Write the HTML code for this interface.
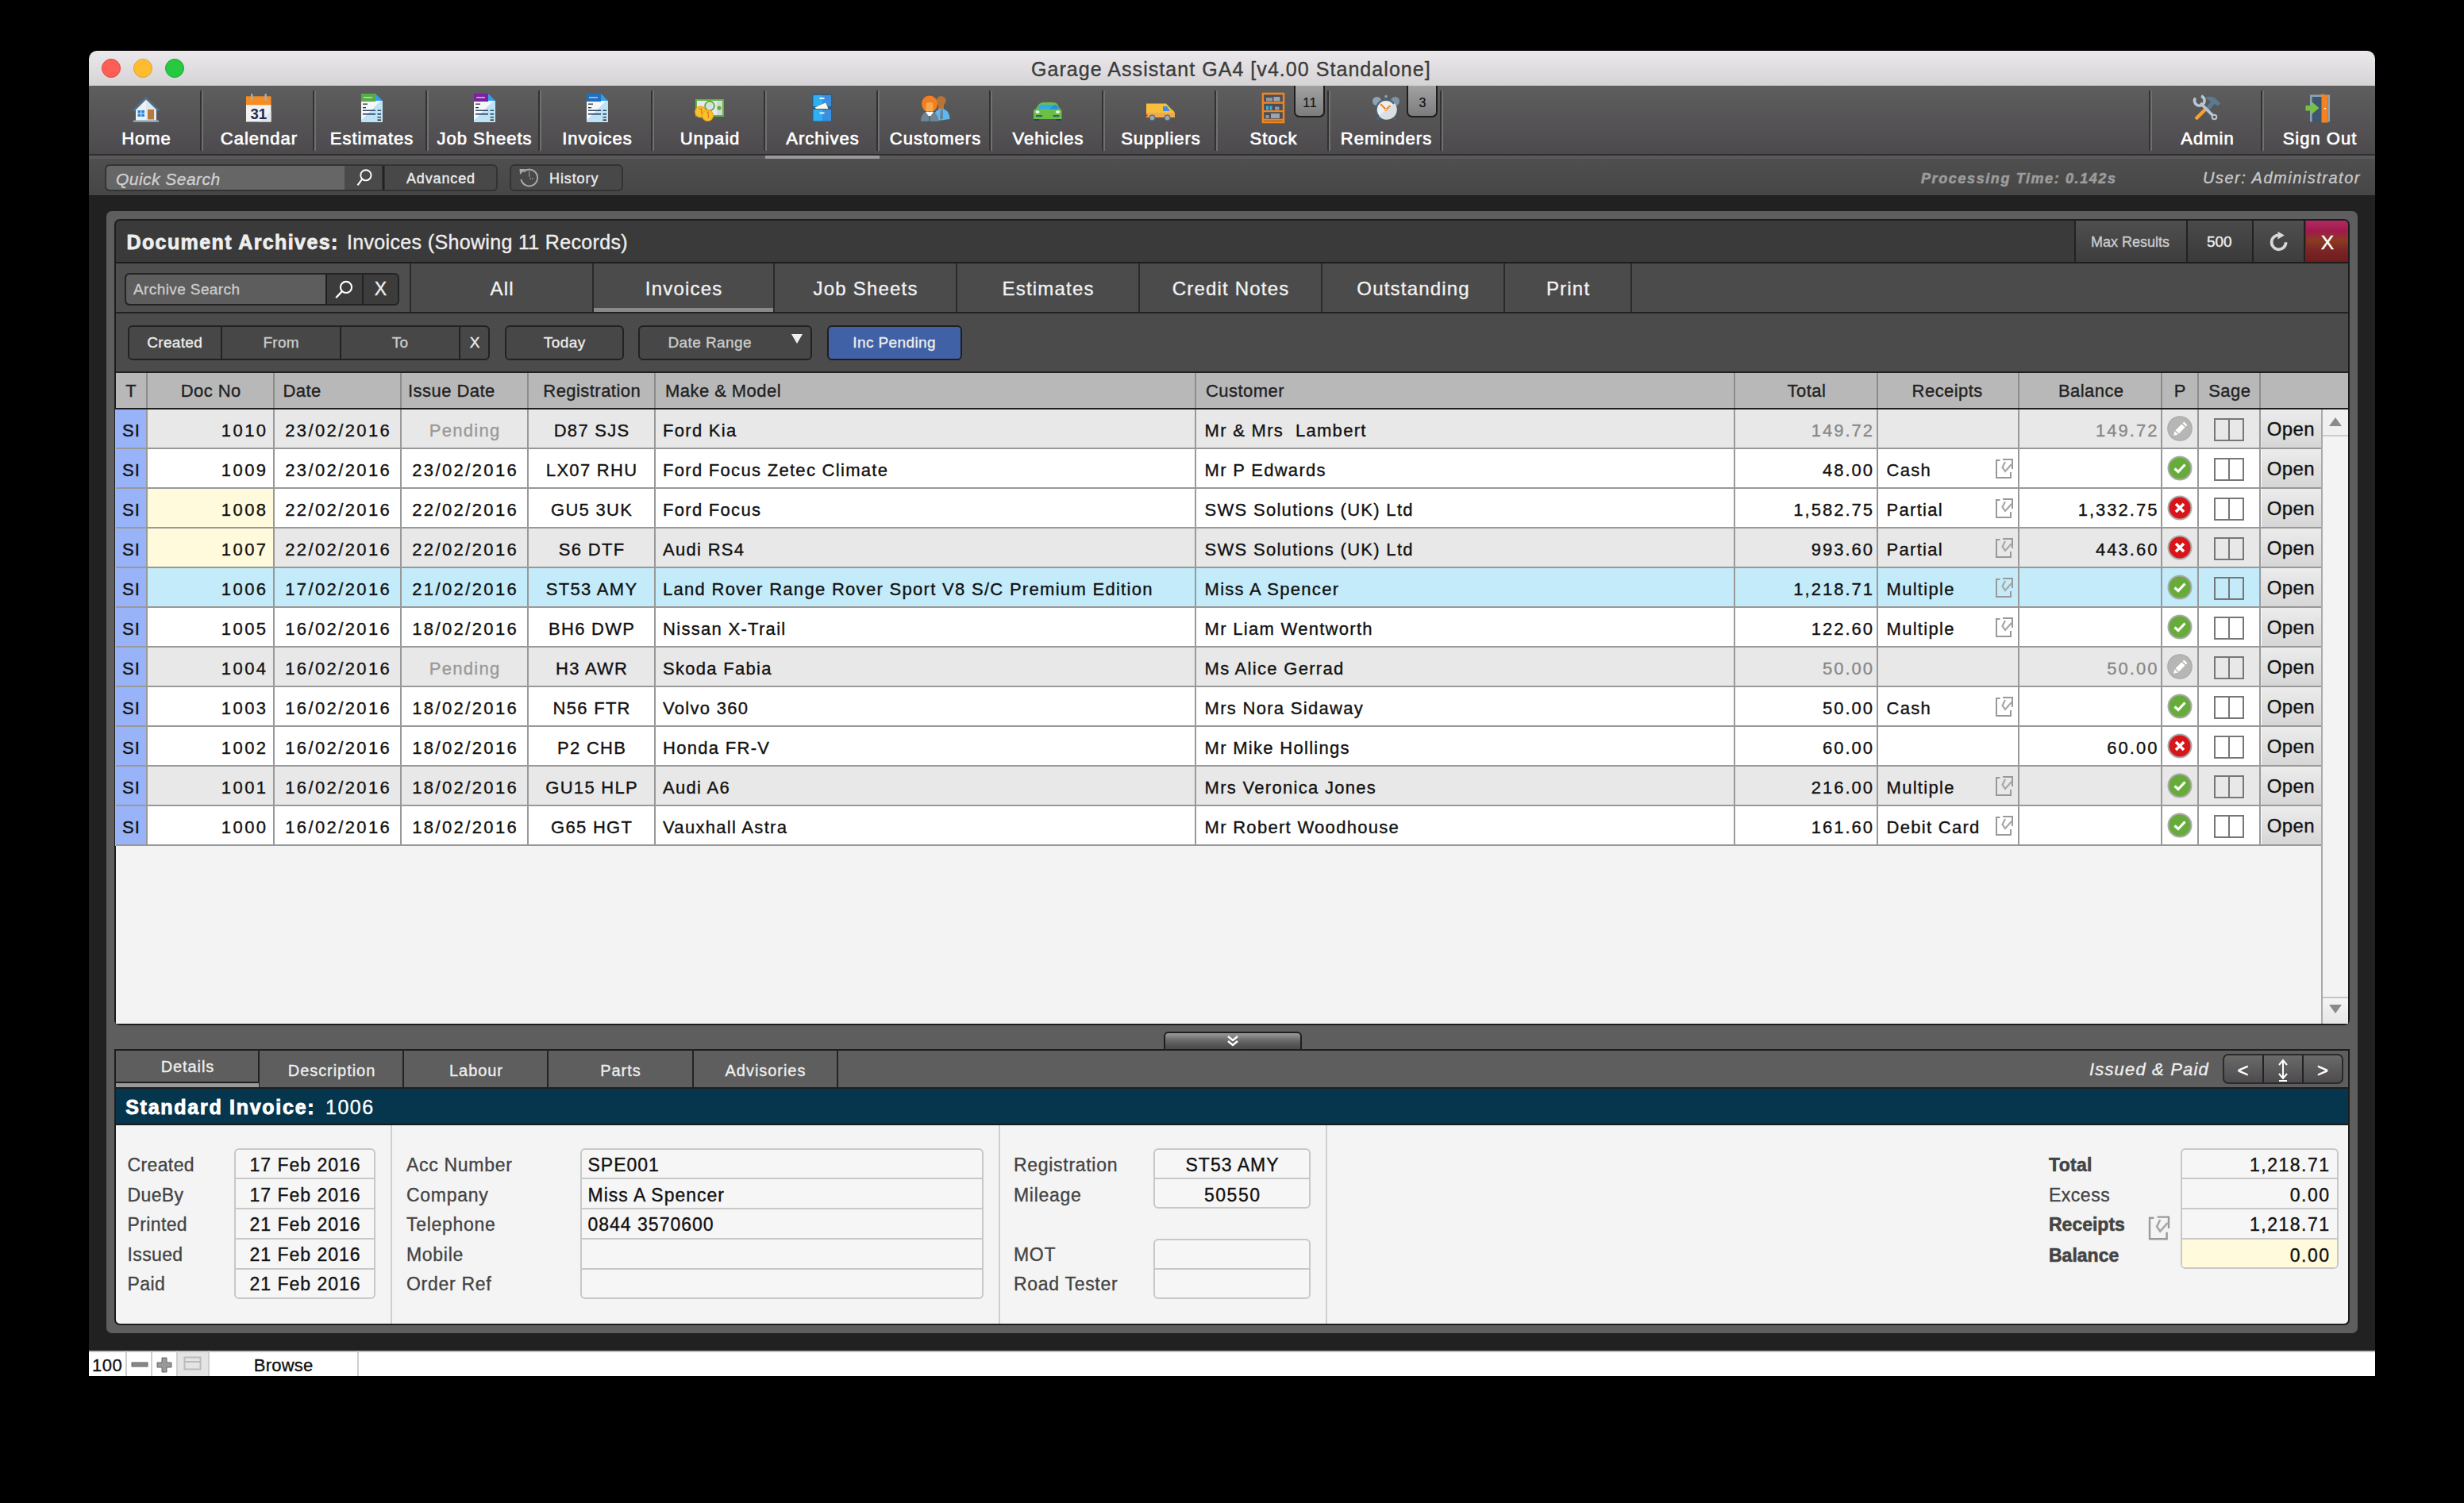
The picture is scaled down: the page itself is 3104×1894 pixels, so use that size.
<!DOCTYPE html><html><head><meta charset="utf-8"><style>
html,body{margin:0;padding:0;background:#000;width:3104px;height:1894px;overflow:hidden;font-family:"Liberation Sans", sans-serif;}
div{box-sizing:border-box;}
</style></head><body>
<div style="position:absolute;left:112px;top:64px;width:2880px;height:44px;background:linear-gradient(#ebe9eb,#d5d3d5);border-radius:10px 10px 0 0;"></div>
<div style="position:absolute;left:128px;top:74px;width:24px;height:24px;background:#fd5f57;border-radius:50%;border:1px solid #e0443e;"></div>
<div style="position:absolute;left:168px;top:74px;width:24px;height:24px;background:#febc2e;border-radius:50%;border:1px solid #dea236;"></div>
<div style="position:absolute;left:208px;top:74px;width:24px;height:24px;background:#28c840;border-radius:50%;border:1px solid #1aab29;"></div>
<div style="position:absolute;top:74.38px;height:27.93px;line-height:27.93px;font-size:25px;color:#3b3b3b;font-weight:normal;font-style:normal;letter-spacing:1.05px;white-space:pre;-webkit-text-stroke:0.35px #3b3b3b;left:1299.00px;">Garage Assistant GA4 [v4.00 Standalone]</div>
<div style="position:absolute;left:112px;top:108px;width:2880px;height:86px;background:linear-gradient(#5e5e5e,#4d4a4d);"></div>
<div style="position:absolute;left:112px;top:194px;width:2880px;height:2px;background:#2e2e2e;"></div>
<div style="position:absolute;left:112px;top:196px;width:2880px;height:4px;background:#595959;"></div>
<div style="position:absolute;left:252px;top:114px;width:4px;height:76px;background:linear-gradient(90deg,#323232 50%,#707070 50%);"></div>
<div style="position:absolute;left:394px;top:114px;width:4px;height:76px;background:linear-gradient(90deg,#323232 50%,#707070 50%);"></div>
<div style="position:absolute;left:536px;top:114px;width:4px;height:76px;background:linear-gradient(90deg,#323232 50%,#707070 50%);"></div>
<div style="position:absolute;left:678px;top:114px;width:4px;height:76px;background:linear-gradient(90deg,#323232 50%,#707070 50%);"></div>
<div style="position:absolute;left:820px;top:114px;width:4px;height:76px;background:linear-gradient(90deg,#323232 50%,#707070 50%);"></div>
<div style="position:absolute;left:962px;top:114px;width:4px;height:76px;background:linear-gradient(90deg,#323232 50%,#707070 50%);"></div>
<div style="position:absolute;left:1104px;top:114px;width:4px;height:76px;background:linear-gradient(90deg,#323232 50%,#707070 50%);"></div>
<div style="position:absolute;left:1246px;top:114px;width:4px;height:76px;background:linear-gradient(90deg,#323232 50%,#707070 50%);"></div>
<div style="position:absolute;left:1388px;top:114px;width:4px;height:76px;background:linear-gradient(90deg,#323232 50%,#707070 50%);"></div>
<div style="position:absolute;left:1530px;top:114px;width:4px;height:76px;background:linear-gradient(90deg,#323232 50%,#707070 50%);"></div>
<div style="position:absolute;left:1672px;top:114px;width:4px;height:76px;background:linear-gradient(90deg,#323232 50%,#707070 50%);"></div>
<div style="position:absolute;left:1814px;top:114px;width:4px;height:76px;background:linear-gradient(90deg,#323232 50%,#707070 50%);"></div>
<div style="position:absolute;left:2707px;top:114px;width:4px;height:76px;background:linear-gradient(90deg,#323232 50%,#707070 50%);"></div>
<div style="position:absolute;left:2848px;top:114px;width:4px;height:76px;background:linear-gradient(90deg,#323232 50%,#707070 50%);"></div>
<div style="position:absolute;top:163.09px;height:24.57px;line-height:24.57px;font-size:22px;color:#ffffff;font-weight:normal;font-style:normal;letter-spacing:1.0px;white-space:pre;-webkit-text-stroke:0.7px #ffffff;left:-415.50px;width:1200px;text-align:center;">Home</div>
<div style="position:absolute;top:163.09px;height:24.57px;line-height:24.57px;font-size:22px;color:#ffffff;font-weight:normal;font-style:normal;letter-spacing:1.0px;white-space:pre;-webkit-text-stroke:0.7px #ffffff;left:-273.50px;width:1200px;text-align:center;">Calendar</div>
<div style="position:absolute;top:163.09px;height:24.57px;line-height:24.57px;font-size:22px;color:#ffffff;font-weight:normal;font-style:normal;letter-spacing:1.0px;white-space:pre;-webkit-text-stroke:0.7px #ffffff;left:-131.50px;width:1200px;text-align:center;">Estimates</div>
<div style="position:absolute;top:163.09px;height:24.57px;line-height:24.57px;font-size:22px;color:#ffffff;font-weight:normal;font-style:normal;letter-spacing:1.0px;white-space:pre;-webkit-text-stroke:0.7px #ffffff;left:10.50px;width:1200px;text-align:center;">Job Sheets</div>
<div style="position:absolute;top:163.09px;height:24.57px;line-height:24.57px;font-size:22px;color:#ffffff;font-weight:normal;font-style:normal;letter-spacing:1.0px;white-space:pre;-webkit-text-stroke:0.7px #ffffff;left:152.50px;width:1200px;text-align:center;">Invoices</div>
<div style="position:absolute;top:163.09px;height:24.57px;line-height:24.57px;font-size:22px;color:#ffffff;font-weight:normal;font-style:normal;letter-spacing:1.0px;white-space:pre;-webkit-text-stroke:0.7px #ffffff;left:294.50px;width:1200px;text-align:center;">Unpaid</div>
<div style="position:absolute;top:163.09px;height:24.57px;line-height:24.57px;font-size:22px;color:#ffffff;font-weight:normal;font-style:normal;letter-spacing:1.0px;white-space:pre;-webkit-text-stroke:0.7px #ffffff;left:436.50px;width:1200px;text-align:center;">Archives</div>
<div style="position:absolute;top:163.09px;height:24.57px;line-height:24.57px;font-size:22px;color:#ffffff;font-weight:normal;font-style:normal;letter-spacing:1.0px;white-space:pre;-webkit-text-stroke:0.7px #ffffff;left:578.50px;width:1200px;text-align:center;">Customers</div>
<div style="position:absolute;top:163.09px;height:24.57px;line-height:24.57px;font-size:22px;color:#ffffff;font-weight:normal;font-style:normal;letter-spacing:1.0px;white-space:pre;-webkit-text-stroke:0.7px #ffffff;left:720.50px;width:1200px;text-align:center;">Vehicles</div>
<div style="position:absolute;top:163.09px;height:24.57px;line-height:24.57px;font-size:22px;color:#ffffff;font-weight:normal;font-style:normal;letter-spacing:1.0px;white-space:pre;-webkit-text-stroke:0.7px #ffffff;left:862.50px;width:1200px;text-align:center;">Suppliers</div>
<div style="position:absolute;top:163.09px;height:24.57px;line-height:24.57px;font-size:22px;color:#ffffff;font-weight:normal;font-style:normal;letter-spacing:1.0px;white-space:pre;-webkit-text-stroke:0.7px #ffffff;left:1004.50px;width:1200px;text-align:center;">Stock</div>
<div style="position:absolute;top:163.09px;height:24.57px;line-height:24.57px;font-size:22px;color:#ffffff;font-weight:normal;font-style:normal;letter-spacing:1.0px;white-space:pre;-webkit-text-stroke:0.7px #ffffff;left:1146.50px;width:1200px;text-align:center;">Reminders</div>
<div style="position:absolute;top:163.09px;height:24.57px;line-height:24.57px;font-size:22px;color:#ffffff;font-weight:normal;font-style:normal;letter-spacing:1.0px;white-space:pre;-webkit-text-stroke:0.7px #ffffff;left:2181.00px;width:1200px;text-align:center;">Admin</div>
<div style="position:absolute;top:163.09px;height:24.57px;line-height:24.57px;font-size:22px;color:#ffffff;font-weight:normal;font-style:normal;letter-spacing:1.0px;white-space:pre;-webkit-text-stroke:0.7px #ffffff;left:2322.50px;width:1200px;text-align:center;">Sign Out</div>
<div style="position:absolute;left:964px;top:196px;width:144px;height:4px;background:#9a9a9a;"></div>
<div style="position:absolute;left:1630px;top:108px;width:39px;height:39.5px;background:linear-gradient(#a2a2a2,#7c7c7c);border:2.5px solid #1e1e1e;border-top:none;border-radius:0 0 7px 7px;"></div>
<div style="position:absolute;top:120.52px;height:17.87px;line-height:17.87px;font-size:16px;color:#111;font-weight:normal;font-style:normal;letter-spacing:0.8px;white-space:pre;-webkit-text-stroke:0.2px #111;left:1050.40px;width:1200px;text-align:center;">11</div>
<div style="position:absolute;left:1772px;top:108px;width:39px;height:39.5px;background:linear-gradient(#a2a2a2,#7c7c7c);border:2.5px solid #1e1e1e;border-top:none;border-radius:0 0 7px 7px;"></div>
<div style="position:absolute;top:120.52px;height:17.87px;line-height:17.87px;font-size:16px;color:#111;font-weight:normal;font-style:normal;letter-spacing:0.8px;white-space:pre;-webkit-text-stroke:0.2px #111;left:1192.40px;width:1200px;text-align:center;">3</div>
<svg style="position:absolute;left:164px;top:118px;overflow:visible" width="40" height="38" viewBox="164 118 40 38">
<polygon points="184,124 171,137 171,152 197,152 197,137" fill="#eef2f5"/>
<polygon points="184,124 197,137 197,152 184,152" fill="#dfe8ee"/>
<path d="M168 139.5 L184 123.5 L200.5 139.5" fill="none" stroke="#4f6e88" stroke-width="3"/>
<rect x="173.5" y="139" width="3.8" height="3.5" fill="#2a86d8"/><rect x="178.2" y="139" width="3.8" height="3.5" fill="#2a86d8"/>
<rect x="173.5" y="143.5" width="3.8" height="3.5" fill="#2a86d8"/><rect x="178.2" y="143.5" width="3.8" height="3.5" fill="#2a86d8"/>
<rect x="186" y="138" width="8" height="12.5" fill="#b77838"/>
<rect x="168" y="151.5" width="32" height="2.5" fill="#8aa2b4"/>
</svg>
<svg style="position:absolute;left:308px;top:116px;overflow:visible" width="36" height="40" viewBox="308 116 36 40">
<rect x="310" y="132" width="31.5" height="21.5" fill="#f2f2f2"/>
<polygon points="341.5,140 341.5,153.5 326,153.5" fill="#e4e4e4"/>
<rect x="310" y="121.3" width="31.5" height="11" fill="#f68c22"/>
<rect x="316" y="118" width="2.4" height="9" rx="1.2" fill="#9db3c3"/>
<rect x="333.5" y="118" width="2.4" height="9" rx="1.2" fill="#9db3c3"/>
<text x="325.8" y="150.3" font-family="Liberation Sans" font-weight="bold" font-size="18.5" fill="#1b2a55" text-anchor="middle">31</text>
</svg>
<svg style="position:absolute;left:454.5px;top:116px;overflow:visible" width="29.0" height="40" viewBox="454.5 116 29.0 40">
<defs><linearGradient id="dg454.5" x1="0" y1="0" x2="1" y2="1"><stop offset="0.45" stop-color="#f4f8fb"/><stop offset="0.46" stop-color="#bfe3f6"/></linearGradient></defs>
<rect x="454.5" y="127" width="27" height="27" fill="url(#dg454.5)"/>
<rect x="454.5" y="118" width="18" height="10" fill="#58ab47"/>
<polygon points="472.5,118 481.5,127 472.5,127" fill="#2fa0ea"/>
<rect x="457.5" y="122" width="11" height="1.5" fill="#e8e8c0" opacity="0.8"/>
<rect x="456.5" y="130.5" width="6" height="1.3" fill="#333"/>
<rect x="456.5" y="135" width="4" height="1.3" fill="#333"/>
<rect x="456.5" y="138.5" width="16" height="1.5" fill="#34495e"/>
<rect x="475.0" y="138.5" width="4.5" height="1.5" fill="#34495e"/>
<rect x="456.5" y="143" width="16" height="1.5" fill="#1a2a5a"/>
<rect x="475.0" y="143" width="4.5" height="1.5" fill="#1a2a5a"/>
<rect x="475.0" y="147" width="4.5" height="1.5" fill="#444"/>
<rect x="475.0" y="150.5" width="4.5" height="1.5" fill="#222"/>
</svg>
<svg style="position:absolute;left:596.7px;top:116px;overflow:visible" width="29.0" height="40" viewBox="596.7 116 29.0 40">
<defs><linearGradient id="dg596.7" x1="0" y1="0" x2="1" y2="1"><stop offset="0.45" stop-color="#f4f8fb"/><stop offset="0.46" stop-color="#bfe3f6"/></linearGradient></defs>
<rect x="596.7" y="127" width="27" height="27" fill="url(#dg596.7)"/>
<rect x="596.7" y="118" width="18" height="10" fill="#7b22a0"/>
<polygon points="614.7,118 623.7,127 614.7,127" fill="#2fa0ea"/>
<rect x="599.7" y="122" width="11" height="1.5" fill="#e8e8c0" opacity="0.8"/>
<rect x="598.7" y="130.5" width="6" height="1.3" fill="#333"/>
<rect x="598.7" y="135" width="4" height="1.3" fill="#333"/>
<rect x="598.7" y="138.5" width="16" height="1.5" fill="#34495e"/>
<rect x="617.2" y="138.5" width="4.5" height="1.5" fill="#34495e"/>
<rect x="598.7" y="143" width="16" height="1.5" fill="#1a2a5a"/>
<rect x="617.2" y="143" width="4.5" height="1.5" fill="#1a2a5a"/>
<rect x="617.2" y="147" width="4.5" height="1.5" fill="#444"/>
<rect x="617.2" y="150.5" width="4.5" height="1.5" fill="#222"/>
</svg>
<svg style="position:absolute;left:738.7px;top:116px;overflow:visible" width="29.0" height="40" viewBox="738.7 116 29.0 40">
<defs><linearGradient id="dg738.7" x1="0" y1="0" x2="1" y2="1"><stop offset="0.45" stop-color="#f4f8fb"/><stop offset="0.46" stop-color="#bfe3f6"/></linearGradient></defs>
<rect x="738.7" y="127" width="27" height="27" fill="url(#dg738.7)"/>
<rect x="738.7" y="118" width="18" height="10" fill="#1f6fc2"/>
<polygon points="756.7,118 765.7,127 756.7,127" fill="#2fa0ea"/>
<rect x="741.7" y="122" width="11" height="1.5" fill="#e8e8c0" opacity="0.8"/>
<rect x="740.7" y="130.5" width="6" height="1.3" fill="#333"/>
<rect x="740.7" y="135" width="4" height="1.3" fill="#333"/>
<rect x="740.7" y="138.5" width="16" height="1.5" fill="#34495e"/>
<rect x="759.2" y="138.5" width="4.5" height="1.5" fill="#34495e"/>
<rect x="740.7" y="143" width="16" height="1.5" fill="#1a2a5a"/>
<rect x="759.2" y="143" width="4.5" height="1.5" fill="#1a2a5a"/>
<rect x="759.2" y="147" width="4.5" height="1.5" fill="#444"/>
<rect x="759.2" y="150.5" width="4.5" height="1.5" fill="#222"/>
</svg>
<svg style="position:absolute;left:872px;top:122px;overflow:visible" width="44" height="36" viewBox="872 122 44 36">
<rect x="876" y="125" width="36" height="22" fill="#63b43f"/>
<rect x="878" y="127" width="32" height="18" fill="#e6e9ec"/>
<rect x="903" y="127" width="7" height="18" fill="#d2d8dd"/>
<circle cx="894" cy="133.5" r="5.8" fill="none" stroke="#5fae3c" stroke-width="2"/>
<circle cx="894" cy="133" r="3.5" fill="#d8dde2"/>
<circle cx="906" cy="136" r="2.6" fill="#5fae3c"/>
<circle cx="882.5" cy="141" r="6.8" fill="#f8c22a" stroke="#f0a020" stroke-width="1.2"/>
<circle cx="891.5" cy="145.5" r="7" fill="#f8c22a" stroke="#f0a020" stroke-width="1.2"/>
<path d="M890.5 141.5 L892 141 L892.5 149" fill="none" stroke="#e07a1a" stroke-width="1.3"/>
<path d="M881 137.5 L883.5 137 L884 144" fill="none" stroke="#e07a1a" stroke-width="1.3"/>
</svg>
<svg style="position:absolute;left:1020px;top:116px;overflow:visible" width="32" height="40" viewBox="1020 116 32 40">
<rect x="1023" y="118" width="25.5" height="36" fill="#3b5a78"/>
<rect x="1024.5" y="120" width="11.5" height="14" fill="#2eb0f4"/><rect x="1036" y="120" width="11" height="14" fill="#3a8fe0"/>
<rect x="1024.5" y="138" width="11.5" height="14.5" fill="#2eb0f4"/><rect x="1036" y="138" width="11" height="14.5" fill="#3a8fe0"/>
<rect x="1032.5" y="123" width="6" height="1.8" fill="#fff"/><rect x="1032.5" y="141.5" width="6" height="1.8" fill="#fff"/>
<polygon points="1026.5,135.5 1040,129.5 1043.5,137 1028,137" fill="#fffbe3"/>
</svg>
<svg style="position:absolute;left:1156px;top:116px;overflow:visible" width="44" height="40" viewBox="1156 116 44 40">
<circle cx="1185.5" cy="127" r="6" fill="#b87436"/>
<rect x="1182" y="130" width="7" height="8" fill="#b87436"/>
<path d="M1176 152 Q1176 138 1186 137 Q1196 138 1196.5 150 Q1186 152 1176 152 Z" fill="#5bb8f2"/>
<polygon points="1185,138 1187.5,138 1188,149 1185.5,151 1184,149" fill="#6a8090"/>
<ellipse cx="1171" cy="131" rx="10" ry="10.5" fill="#f17f22"/>
<rect x="1166.5" y="129" width="9" height="12" rx="3" fill="#f6a84c"/>
<path d="M1160 153 Q1160 141 1171 140 Q1182 141 1182.5 153 Z" fill="#6e8393"/>
<polygon points="1166,141 1171,148 1176,141" fill="#fafafa"/>
<polygon points="1170,146 1172,146 1172,153 1170,153" fill="#55697a"/>
</svg>
<svg style="position:absolute;left:1298px;top:126px;overflow:visible" width="44" height="30" viewBox="1298 126 44 30">
<path d="M1309 131 Q1311 129 1315 129 L1326 129 Q1330 129 1332 131 L1335 137 L1337.5 139 L1337.5 150 L1302 150 L1302 139 L1305 137 Z" fill="#6cbf45"/>
<polygon points="1310,132 1331,132 1334,137.5 1307,137.5" fill="#2eaaf0"/>
<polygon points="1322,137.5 1328,132 1331,132 1334,137.5" fill="#2590e0"/>
<ellipse cx="1307" cy="141" rx="2.6" ry="1.8" fill="#fff"/><ellipse cx="1332.5" cy="141" rx="2.6" ry="1.8" fill="#fff"/>
<rect x="1305" y="145" width="8" height="2.2" fill="#3c5a78"/><rect x="1326.5" y="145" width="8" height="2.2" fill="#3c5a78"/>
<rect x="1303" y="150" width="6" height="2" fill="#24406a"/><rect x="1330.5" y="150" width="6" height="2" fill="#24406a"/>
</svg>
<svg style="position:absolute;left:1440px;top:126px;overflow:visible" width="44" height="30" viewBox="1440 126 44 30">
<path d="M1444 130.5 L1469 130.5 L1476 138 Q1480 140 1480 144 L1480 148 L1444 148 Z" fill="#f8bf3e"/>
<rect x="1444" y="142" width="36" height="6" fill="#f0a848"/>
<polygon points="1465,134 1470,134 1474,140 1465,140" fill="#3c8ee8"/>
<circle cx="1451.5" cy="148.5" r="3.3" fill="#9aa8b2" stroke="#5a6a78" stroke-width="1.2"/>
<circle cx="1470.5" cy="148.5" r="3.3" fill="#9aa8b2" stroke="#5a6a78" stroke-width="1.2"/>
<rect x="1444" y="144.5" width="1.5" height="2" fill="#e02020"/>
</svg>
<svg style="position:absolute;left:1588px;top:116px;overflow:visible" width="32" height="40" viewBox="1588 116 32 40">
<rect x="1591" y="118" width="26" height="36" fill="none" stroke="#f2841e" stroke-width="2.6"/>
<rect x="1592" y="128.3" width="24" height="2.4" fill="#f2841e"/>
<rect x="1592" y="139" width="24" height="2.4" fill="#f2841e"/>
<rect x="1592" y="149.5" width="24" height="2.4" fill="#f2841e"/>
<rect x="1592.5" y="120" width="23" height="8" fill="#4c4c54"/>
<rect x="1595" y="123" width="8" height="4.5" fill="#8c9aa6"/><rect x="1604.5" y="122" width="8" height="5.5" fill="#98a6b2"/>
<rect x="1592.5" y="131" width="23" height="8" fill="#4c4c54"/>
<rect x="1595" y="133.5" width="3" height="5" fill="#2eb0f4"/><rect x="1599.5" y="133.5" width="3" height="5" fill="#2eb0f4"/><rect x="1606" y="134.5" width="5.5" height="4" fill="#8c9aa6"/>
<rect x="1592.5" y="141.5" width="23" height="8" fill="#4c4c54"/>
<rect x="1594.5" y="145" width="4" height="4" fill="#8c9aa6"/><rect x="1601" y="143" width="11" height="6" fill="#98a6b2"/>
</svg>
<svg style="position:absolute;left:1726px;top:116px;overflow:visible" width="40" height="40" viewBox="1726 116 40 40">
<circle cx="1734.5" cy="127.5" r="5.5" fill="#8ea4b4"/>
<circle cx="1757.5" cy="127.5" r="5.5" fill="#7d94a6"/>
<circle cx="1746" cy="121.5" r="1.8" fill="#8ea4b4"/>
<rect x="1733" y="148" width="4" height="3.5" fill="#4a6278"/><rect x="1755" y="148" width="4" height="3.5" fill="#4a6278"/>
<circle cx="1746" cy="137.8" r="13.2" fill="#4a6278"/>
<circle cx="1746" cy="138.2" r="11.2" fill="#eeeeee"/>
<path d="M1746 138.2 L1757 130 A11.2 11.2 0 0 1 1737 146 Z" fill="#d8e0e6"/>
<path d="M1739 131 L1746 138 L1751.5 133" fill="none" stroke="#f08a1a" stroke-width="2"/>
<circle cx="1746" cy="138" r="1.5" fill="#fff" stroke="#f08a1a" stroke-width="1"/>
</svg>
<svg style="position:absolute;left:2760px;top:116px;overflow:visible" width="40" height="40" viewBox="2760 116 40 40">
<path d="M2766 150 L2780 136" stroke="#f7a030" stroke-width="4.5"/>
<path d="M2777 124 Q2784 119 2791 124 L2797 130 L2794.5 133.5 L2789.5 131 L2781 141 L2777.5 137.5 L2785 128 Q2782 125 2777 124 Z" fill="#5a7a92"/>
<path d="M2772 130 L2790 148" stroke="#b8c6d0" stroke-width="3.8"/>
<path d="M2765.5 123.5 A6.3 6.3 0 1 0 2773 121" fill="none" stroke="#b8c6d0" stroke-width="3.6"/>
<circle cx="2789.5" cy="147.5" r="3.8" fill="#b8c6d0"/><circle cx="2789.5" cy="147.5" r="1.8" fill="#555"/>
</svg>
<svg style="position:absolute;left:2900px;top:116px;overflow:visible" width="40" height="40" viewBox="2900 116 40 40">
<rect x="2910" y="119.5" width="25" height="34" fill="#8ea4b4"/>
<rect x="2912.5" y="122" width="20" height="32" fill="#3e5670"/>
<polygon points="2924.5,118 2932.5,120.5 2932.5,154.5 2924.5,154.5" fill="#f58220"/>
<rect x="2928" y="136" width="2" height="1.5" fill="#fff"/>
<polygon points="2904.5,133 2912,133 2912,128 2921.5,136 2912,144 2912,139.5 2904.5,139.5" fill="#78bf48"/>
</svg>
<div style="position:absolute;left:112px;top:200px;width:2880px;height:46px;background:linear-gradient(#4f4f4f,#464646);"></div>
<div style="position:absolute;left:132px;top:207px;width:351px;height:34px;background:#4a4a4a;border:2px solid #333;border-radius:6px 0 0 6px;"></div>
<div style="position:absolute;left:134px;top:209px;width:300px;height:30px;background:#666;border-radius:5px 0 0 5px;"></div>
<div style="position:absolute;top:213.59px;height:23.46px;line-height:23.46px;font-size:21px;color:#cfcfcf;font-weight:normal;font-style:italic;letter-spacing:0.47px;white-space:pre;-webkit-text-stroke:0.35px #cfcfcf;left:146.00px;">Quick Search</div>
<div style="position:absolute;left:483px;top:207px;width:144px;height:34px;background:#484848;border:2px solid #333;border-radius:0 6px 6px 0;"></div>
<svg style="position:absolute;left:444px;top:210px;overflow:visible" width="30" height="28" viewBox="444 210 30 28"><circle cx="460.9" cy="220.8" r="6.6" fill="none" stroke="#fff" stroke-width="1.9"/><path d="M456.3 225.6 L450.5 233.4" stroke="#fff" stroke-width="2"/></svg>
<div style="position:absolute;left:482px;top:209px;width:2px;height:30px;background:#222;"></div>
<div style="position:absolute;top:214.71px;height:20.11px;line-height:20.11px;font-size:18px;color:#eeeeee;font-weight:normal;font-style:normal;letter-spacing:0.87px;white-space:pre;-webkit-text-stroke:0.35px #eeeeee;left:-44.56px;width:1200px;text-align:center;">Advanced</div>
<div style="position:absolute;left:642px;top:207px;width:143px;height:34px;background:#484848;border:2px solid #333;border-radius:6px;"></div>
<svg style="position:absolute;left:652px;top:210px;overflow:visible" width="30" height="28" viewBox="652 210 30 28"><path d="M659.5 216.5 A10.4 10.4 0 1 1 656.5 226" fill="none" stroke="#a8a8a8" stroke-width="2"/><polygon points="654.5,213 662,213 655,220" fill="#a8a8a8"/><path d="M666.7 216 V223.5 M667.5 225 H672" stroke="#ccc" stroke-width="1.2" stroke-dasharray="1.5 1"/></svg>
<div style="position:absolute;top:214.71px;height:20.11px;line-height:20.11px;font-size:18px;color:#eeeeee;font-weight:normal;font-style:normal;letter-spacing:0.9px;white-space:pre;-webkit-text-stroke:0.35px #eeeeee;left:692.00px;">History</div>
<div style="position:absolute;top:214.71px;height:20.11px;line-height:20.11px;font-size:18px;color:#9b9b9b;font-weight:bold;font-style:italic;letter-spacing:1.6px;white-space:pre;-webkit-text-stroke:0.6px #9b9b9b;left:2420.00px;">Processing Time: 0.142s</div>
<div style="position:absolute;top:212.90px;height:22.34px;line-height:22.34px;font-size:20px;color:#c8c8c8;font-weight:normal;font-style:italic;letter-spacing:1.5px;white-space:pre;-webkit-text-stroke:0.35px #c8c8c8;left:2775.00px;">User: Administrator</div>
<div style="position:absolute;left:112px;top:246px;width:2880px;height:1457px;background:#212121;"></div>
<div style="position:absolute;left:134px;top:266px;width:2836px;height:1414px;background:#5e5e5e;border-radius:7px;"></div>
<div style="position:absolute;left:144px;top:276px;width:2816px;height:1016px;background:#3a3a3a;border:2px solid #1d1d1d;border-radius:7px 7px 7px 7px;overflow:hidden;"></div>
<div style="position:absolute;top:292.38px;height:27.93px;line-height:27.93px;font-size:25px;color:#eeeeee;font-weight:normal;font-style:normal;letter-spacing:1.39px;white-space:pre;-webkit-text-stroke:0.8px #eeeeee;left:159.50px;"><b>Document Archives:</b></div>
<div style="position:absolute;top:292.38px;height:27.93px;line-height:27.93px;font-size:25px;color:#eeeeee;font-weight:normal;font-style:normal;letter-spacing:0.34px;white-space:pre;-webkit-text-stroke:0.35px #eeeeee;left:437.00px;">Invoices (Showing 11 Records)</div>
<div style="position:absolute;left:2613px;top:278px;width:141px;height:52px;background:linear-gradient(#4f4f4f,#3d3d3d);border-left:2px solid #222;"></div>
<div style="position:absolute;top:294.71px;height:20.11px;line-height:20.11px;font-size:18px;color:#cccccc;font-weight:normal;font-style:normal;letter-spacing:0.0px;white-space:pre;-webkit-text-stroke:0.35px #cccccc;left:2083.60px;width:1200px;text-align:center;">Max Results</div>
<div style="position:absolute;left:2754px;top:278px;width:83px;height:52px;background:linear-gradient(#4a4a4a,#3a3a3a);border-left:2px solid #222;"></div>
<div style="position:absolute;top:293.81px;height:21.22px;line-height:21.22px;font-size:19px;color:#eeeeee;font-weight:normal;font-style:normal;letter-spacing:0.0px;white-space:pre;-webkit-text-stroke:0.35px #eeeeee;left:2195.75px;width:1200px;text-align:center;">500</div>
<div style="position:absolute;left:2837px;top:278px;width:67px;height:52px;background:linear-gradient(#4f4f4f,#3d3d3d);border-left:2px solid #222;border-right:2px solid #222;"></div>
<div style="position:absolute;left:2905px;top:278px;width:53px;height:52px;background:linear-gradient(#b22a62,#a01a4c 25%,#8c3a22 48%,#7c2626 70%,#6e1c1c);border-radius:0 5px 0 0;"></div>
<div style="position:absolute;top:291.73px;height:27.37px;line-height:27.37px;font-size:24.5px;color:#ffffff;font-weight:normal;font-style:normal;letter-spacing:0.0px;white-space:pre;-webkit-text-stroke:0.35px #ffffff;left:2331.90px;width:1200px;text-align:center;">X</div>
<svg style="position:absolute;left:2855px;top:290px;overflow:visible" width="31" height="30" viewBox="2855 290 31 30"><path d="M2879.6 305.3 A9 9 0 1 1 2872 296.4" fill="none" stroke="#d8d8d8" stroke-width="3.7"/><polygon points="2869.5,291.8 2877.8,296.4 2869.5,301.5" fill="#d8d8d8"/></svg>
<div style="position:absolute;left:146px;top:330px;width:2812px;height:2px;background:#1d1d1d;"></div>
<div style="position:absolute;left:146px;top:332px;width:2812px;height:62px;background:#4b4b4b;"></div>
<div style="position:absolute;left:146px;top:332px;width:371px;height:62px;background:#4e4e4e;"></div>
<div style="position:absolute;left:516px;top:332px;width:2px;height:62px;background:#2a2a2a;"></div>
<div style="position:absolute;left:746px;top:332px;width:2px;height:62px;background:#2a2a2a;"></div>
<div style="position:absolute;left:974px;top:332px;width:2px;height:62px;background:#2a2a2a;"></div>
<div style="position:absolute;left:1204px;top:332px;width:2px;height:62px;background:#2a2a2a;"></div>
<div style="position:absolute;left:1434px;top:332px;width:2px;height:62px;background:#2a2a2a;"></div>
<div style="position:absolute;left:1664px;top:332px;width:2px;height:62px;background:#2a2a2a;"></div>
<div style="position:absolute;left:1894px;top:332px;width:2px;height:62px;background:#2a2a2a;"></div>
<div style="position:absolute;left:2054px;top:332px;width:2px;height:62px;background:#2a2a2a;"></div>
<div style="position:absolute;top:351.28px;height:26.81px;line-height:26.81px;font-size:24px;color:#f2f2f2;font-weight:normal;font-style:normal;letter-spacing:1.2px;white-space:pre;-webkit-text-stroke:0.35px #f2f2f2;left:32.60px;width:1200px;text-align:center;">All</div>
<div style="position:absolute;top:351.28px;height:26.81px;line-height:26.81px;font-size:24px;color:#f2f2f2;font-weight:normal;font-style:normal;letter-spacing:1.2px;white-space:pre;-webkit-text-stroke:0.35px #f2f2f2;left:261.60px;width:1200px;text-align:center;">Invoices</div>
<div style="position:absolute;top:351.28px;height:26.81px;line-height:26.81px;font-size:24px;color:#f2f2f2;font-weight:normal;font-style:normal;letter-spacing:1.2px;white-space:pre;-webkit-text-stroke:0.35px #f2f2f2;left:490.60px;width:1200px;text-align:center;">Job Sheets</div>
<div style="position:absolute;top:351.28px;height:26.81px;line-height:26.81px;font-size:24px;color:#f2f2f2;font-weight:normal;font-style:normal;letter-spacing:1.2px;white-space:pre;-webkit-text-stroke:0.35px #f2f2f2;left:720.60px;width:1200px;text-align:center;">Estimates</div>
<div style="position:absolute;top:351.28px;height:26.81px;line-height:26.81px;font-size:24px;color:#f2f2f2;font-weight:normal;font-style:normal;letter-spacing:1.2px;white-space:pre;-webkit-text-stroke:0.35px #f2f2f2;left:950.60px;width:1200px;text-align:center;">Credit Notes</div>
<div style="position:absolute;top:351.28px;height:26.81px;line-height:26.81px;font-size:24px;color:#f2f2f2;font-weight:normal;font-style:normal;letter-spacing:1.2px;white-space:pre;-webkit-text-stroke:0.35px #f2f2f2;left:1180.60px;width:1200px;text-align:center;">Outstanding</div>
<div style="position:absolute;top:351.28px;height:26.81px;line-height:26.81px;font-size:24px;color:#f2f2f2;font-weight:normal;font-style:normal;letter-spacing:1.2px;white-space:pre;-webkit-text-stroke:0.35px #f2f2f2;left:1375.60px;width:1200px;text-align:center;">Print</div>
<div style="position:absolute;left:748px;top:388px;width:226px;height:6px;background:#8a8a8a;"></div>
<div style="position:absolute;left:157px;top:344px;width:346px;height:41px;background:#3c3c3c;border:2px solid #232323;border-radius:6px;"></div>
<div style="position:absolute;left:159px;top:346px;width:252px;height:37px;background:#5d5d5d;border-radius:5px 0 0 5px;"></div>
<div style="position:absolute;left:456px;top:346px;width:2px;height:37px;background:#232323;"></div>
<div style="position:absolute;top:354.31px;height:21.22px;line-height:21.22px;font-size:19px;color:#cccccc;font-weight:normal;font-style:normal;letter-spacing:0.4px;white-space:pre;-webkit-text-stroke:0.35px #cccccc;left:168.00px;">Archive Search</div>
<div style="position:absolute;top:352.19px;height:25.69px;line-height:25.69px;font-size:23px;color:#f0f0f0;font-weight:normal;font-style:normal;letter-spacing:0.0px;white-space:pre;-webkit-text-stroke:0.35px #f0f0f0;left:-120.50px;width:1200px;text-align:center;">X</div>
<div style="position:absolute;left:410px;top:346px;width:2px;height:37px;background:#1e1e1e;"></div>
<svg style="position:absolute;left:418px;top:350px;overflow:visible" width="32" height="30" viewBox="418 350 32 30"><circle cx="436" cy="361.9" r="7.06" fill="none" stroke="#fff" stroke-width="2.1"/><path d="M431 367 L423.2 375.3" stroke="#fff" stroke-width="2.4"/></svg>
<div style="position:absolute;left:146px;top:393px;width:2812px;height:2px;background:#222;"></div>
<div style="position:absolute;left:146px;top:395px;width:2812px;height:73px;background:#4b4b4b;"></div>
<div style="position:absolute;left:161px;top:410px;width:456px;height:44px;background:#474747;border:2px solid #222;border-radius:6px;"></div>
<div style="position:absolute;left:278px;top:412px;width:2px;height:40px;background:#222;"></div>
<div style="position:absolute;left:428px;top:412px;width:2px;height:40px;background:#222;"></div>
<div style="position:absolute;left:578px;top:412px;width:2px;height:40px;background:#222;"></div>
<div style="position:absolute;top:421.31px;height:21.22px;line-height:21.22px;font-size:19px;color:#eeeeee;font-weight:normal;font-style:normal;letter-spacing:0.34px;white-space:pre;-webkit-text-stroke:0.35px #eeeeee;left:-379.83px;width:1200px;text-align:center;">Created</div>
<div style="position:absolute;top:421.31px;height:21.22px;line-height:21.22px;font-size:19px;color:#cccccc;font-weight:normal;font-style:normal;letter-spacing:0.3px;white-space:pre;-webkit-text-stroke:0.35px #cccccc;left:-245.85px;width:1200px;text-align:center;">From</div>
<div style="position:absolute;top:421.31px;height:21.22px;line-height:21.22px;font-size:19px;color:#cccccc;font-weight:normal;font-style:normal;letter-spacing:0.3px;white-space:pre;-webkit-text-stroke:0.35px #cccccc;left:-95.85px;width:1200px;text-align:center;">To</div>
<div style="position:absolute;top:421.31px;height:21.22px;line-height:21.22px;font-size:19px;color:#eeeeee;font-weight:normal;font-style:normal;letter-spacing:0.0px;white-space:pre;-webkit-text-stroke:0.35px #eeeeee;left:-2.00px;width:1200px;text-align:center;">X</div>
<div style="position:absolute;left:636px;top:410px;width:150px;height:44px;background:#474747;border:2px solid #222;border-radius:6px;"></div>
<div style="position:absolute;top:421.31px;height:21.22px;line-height:21.22px;font-size:19px;color:#eeeeee;font-weight:normal;font-style:normal;letter-spacing:0.4px;white-space:pre;-webkit-text-stroke:0.35px #eeeeee;left:111.20px;width:1200px;text-align:center;">Today</div>
<div style="position:absolute;left:804px;top:410px;width:219px;height:44px;background:#474747;border:2px solid #222;border-radius:6px;"></div>
<div style="position:absolute;top:421.31px;height:21.22px;line-height:21.22px;font-size:19px;color:#cccccc;font-weight:normal;font-style:normal;letter-spacing:0.4px;white-space:pre;-webkit-text-stroke:0.35px #cccccc;left:294.20px;width:1200px;text-align:center;">Date Range</div>
<svg style="position:absolute;left:996px;top:420px" width="16" height="14"><polygon points="1,1 15,1 8,13" fill="#f0f0f0"/></svg>
<div style="position:absolute;left:1042px;top:410px;width:170px;height:44px;background:#4061a6;border:2px solid #1e1e1e;border-radius:6px;"></div>
<div style="position:absolute;top:421.31px;height:21.22px;line-height:21.22px;font-size:19px;color:#eeeeee;font-weight:normal;font-style:normal;letter-spacing:0.4px;white-space:pre;-webkit-text-stroke:0.35px #eeeeee;left:526.70px;width:1200px;text-align:center;">Inc Pending</div>
<div style="position:absolute;left:146px;top:468px;width:2812px;height:2px;background:#222;"></div>
<div style="position:absolute;left:146px;top:470px;width:2812px;height:820px;background:#f3f3f3;"></div>
<div style="position:absolute;left:146px;top:470px;width:2812px;height:44px;background:#b8b8b8;"></div>
<div style="position:absolute;left:146px;top:514px;width:2812px;height:2px;background:#1e1e1e;"></div>
<div style="position:absolute;left:184px;top:470px;width:2px;height:44px;background:#8c8c8c;"></div>
<div style="position:absolute;left:344px;top:470px;width:2px;height:44px;background:#8c8c8c;"></div>
<div style="position:absolute;left:504px;top:470px;width:2px;height:44px;background:#8c8c8c;"></div>
<div style="position:absolute;left:664px;top:470px;width:2px;height:44px;background:#8c8c8c;"></div>
<div style="position:absolute;left:824px;top:470px;width:2px;height:44px;background:#8c8c8c;"></div>
<div style="position:absolute;left:1505px;top:470px;width:2px;height:44px;background:#8c8c8c;"></div>
<div style="position:absolute;left:2184px;top:470px;width:2px;height:44px;background:#8c8c8c;"></div>
<div style="position:absolute;left:2364px;top:470px;width:2px;height:44px;background:#8c8c8c;"></div>
<div style="position:absolute;left:2542px;top:470px;width:2px;height:44px;background:#8c8c8c;"></div>
<div style="position:absolute;left:2722px;top:470px;width:2px;height:44px;background:#8c8c8c;"></div>
<div style="position:absolute;left:2768px;top:470px;width:2px;height:44px;background:#8c8c8c;"></div>
<div style="position:absolute;left:2846px;top:470px;width:2px;height:44px;background:#8c8c8c;"></div>
<div style="position:absolute;top:481.09px;height:24.57px;line-height:24.57px;font-size:22px;color:#222;font-weight:normal;font-style:normal;letter-spacing:0.0px;white-space:pre;-webkit-text-stroke:0.35px #222;left:-435.00px;width:1200px;text-align:center;">T</div>
<div style="position:absolute;top:481.09px;height:24.57px;line-height:24.57px;font-size:22px;color:#222;font-weight:normal;font-style:normal;letter-spacing:0.45px;white-space:pre;-webkit-text-stroke:0.35px #222;left:-334.27px;width:1200px;text-align:center;">Doc No</div>
<div style="position:absolute;top:481.09px;height:24.57px;line-height:24.57px;font-size:22px;color:#222;font-weight:normal;font-style:normal;letter-spacing:0.45px;white-space:pre;-webkit-text-stroke:0.35px #222;left:356.50px;">Date</div>
<div style="position:absolute;top:481.09px;height:24.57px;line-height:24.57px;font-size:22px;color:#222;font-weight:normal;font-style:normal;letter-spacing:0.45px;white-space:pre;-webkit-text-stroke:0.35px #222;left:514.00px;">Issue Date</div>
<div style="position:absolute;top:481.09px;height:24.57px;line-height:24.57px;font-size:22px;color:#222;font-weight:normal;font-style:normal;letter-spacing:0.45px;white-space:pre;-webkit-text-stroke:0.35px #222;left:145.72px;width:1200px;text-align:center;">Registration</div>
<div style="position:absolute;top:481.09px;height:24.57px;line-height:24.57px;font-size:22px;color:#222;font-weight:normal;font-style:normal;letter-spacing:0.45px;white-space:pre;-webkit-text-stroke:0.35px #222;left:838.00px;">Make &amp; Model</div>
<div style="position:absolute;top:481.09px;height:24.57px;line-height:24.57px;font-size:22px;color:#222;font-weight:normal;font-style:normal;letter-spacing:0.45px;white-space:pre;-webkit-text-stroke:0.35px #222;left:1519.00px;">Customer</div>
<div style="position:absolute;top:481.09px;height:24.57px;line-height:24.57px;font-size:22px;color:#222;font-weight:normal;font-style:normal;letter-spacing:0.45px;white-space:pre;-webkit-text-stroke:0.35px #222;left:1675.97px;width:1200px;text-align:center;">Total</div>
<div style="position:absolute;top:481.09px;height:24.57px;line-height:24.57px;font-size:22px;color:#222;font-weight:normal;font-style:normal;letter-spacing:0.45px;white-space:pre;-webkit-text-stroke:0.35px #222;left:1853.22px;width:1200px;text-align:center;">Receipts</div>
<div style="position:absolute;top:481.09px;height:24.57px;line-height:24.57px;font-size:22px;color:#222;font-weight:normal;font-style:normal;letter-spacing:0.45px;white-space:pre;-webkit-text-stroke:0.35px #222;left:2034.22px;width:1200px;text-align:center;">Balance</div>
<div style="position:absolute;top:481.09px;height:24.57px;line-height:24.57px;font-size:22px;color:#222;font-weight:normal;font-style:normal;letter-spacing:0.0px;white-space:pre;-webkit-text-stroke:0.35px #222;left:2146.00px;width:1200px;text-align:center;">P</div>
<div style="position:absolute;top:481.09px;height:24.57px;line-height:24.57px;font-size:22px;color:#222;font-weight:normal;font-style:normal;letter-spacing:0.45px;white-space:pre;-webkit-text-stroke:0.35px #222;left:2208.82px;width:1200px;text-align:center;">Sage</div>
<div style="position:absolute;left:146px;top:516px;width:2779px;height:50px;background:#e8e8e8;"></div>
<div style="position:absolute;left:145px;top:516px;width:40px;height:50px;background:#98b3f7;"></div>
<div style="position:absolute;left:184px;top:516px;width:2px;height:50px;background:#999;"></div>
<div style="position:absolute;left:344px;top:516px;width:2px;height:50px;background:#999;"></div>
<div style="position:absolute;left:504px;top:516px;width:2px;height:50px;background:#999;"></div>
<div style="position:absolute;left:664px;top:516px;width:2px;height:50px;background:#999;"></div>
<div style="position:absolute;left:824px;top:516px;width:2px;height:50px;background:#999;"></div>
<div style="position:absolute;left:1505px;top:516px;width:2px;height:50px;background:#999;"></div>
<div style="position:absolute;left:2184px;top:516px;width:2px;height:50px;background:#999;"></div>
<div style="position:absolute;left:2364px;top:516px;width:2px;height:50px;background:#999;"></div>
<div style="position:absolute;left:2542px;top:516px;width:2px;height:50px;background:#999;"></div>
<div style="position:absolute;left:2722px;top:516px;width:2px;height:50px;background:#999;"></div>
<div style="position:absolute;left:2768px;top:516px;width:2px;height:50px;background:#999;"></div>
<div style="position:absolute;left:2846px;top:516px;width:2px;height:50px;background:#999;"></div>
<div style="position:absolute;left:146px;top:564px;width:2779px;height:2px;background:#999;"></div>
<div style="position:absolute;top:530.69px;height:24.57px;line-height:24.57px;font-size:22px;color:#111;font-weight:normal;font-style:normal;letter-spacing:1.0px;white-space:pre;-webkit-text-stroke:0.35px #111;left:-434.50px;width:1200px;text-align:center;">SI</div>
<div style="position:absolute;top:530.69px;height:24.57px;line-height:24.57px;font-size:22px;color:#111;font-weight:normal;font-style:normal;letter-spacing:2.4px;white-space:pre;-webkit-text-stroke:0.35px #111;left:-862.60px;width:1200px;text-align:right;">1010</div>
<div style="position:absolute;top:530.69px;height:24.57px;line-height:24.57px;font-size:22px;color:#111;font-weight:normal;font-style:normal;letter-spacing:2.4px;white-space:pre;-webkit-text-stroke:0.35px #111;left:-173.80px;width:1200px;text-align:center;">23/02/2016</div>
<div style="position:absolute;top:530.69px;height:24.57px;line-height:24.57px;font-size:22px;color:#999;font-weight:normal;font-style:normal;letter-spacing:1.3px;white-space:pre;-webkit-text-stroke:0.35px #999;left:-14.35px;width:1200px;text-align:center;">Pending</div>
<div style="position:absolute;top:530.69px;height:24.57px;line-height:24.57px;font-size:22px;color:#111;font-weight:normal;font-style:normal;letter-spacing:1.3px;white-space:pre;-webkit-text-stroke:0.35px #111;left:145.65px;width:1200px;text-align:center;">D87 SJS</div>
<div style="position:absolute;top:530.69px;height:24.57px;line-height:24.57px;font-size:22px;color:#111;font-weight:normal;font-style:normal;letter-spacing:1.3px;white-space:pre;-webkit-text-stroke:0.35px #111;left:835.00px;">Ford Kia</div>
<div style="position:absolute;top:530.69px;height:24.57px;line-height:24.57px;font-size:22px;color:#111;font-weight:normal;font-style:normal;letter-spacing:1.3px;white-space:pre;-webkit-text-stroke:0.35px #111;left:1517.50px;">Mr &amp; Mrs  Lambert</div>
<div style="position:absolute;top:530.69px;height:24.57px;line-height:24.57px;font-size:22px;color:#888;font-weight:normal;font-style:normal;letter-spacing:2.0px;white-space:pre;-webkit-text-stroke:0.35px #888;left:1161.00px;width:1200px;text-align:right;">149.72</div>
<div style="position:absolute;top:530.69px;height:24.57px;line-height:24.57px;font-size:22px;color:#888;font-weight:normal;font-style:normal;letter-spacing:2.0px;white-space:pre;-webkit-text-stroke:0.35px #888;left:1519.40px;width:1200px;text-align:right;">149.72</div>
<svg style="position:absolute;left:2730px;top:524px" width="32" height="32" viewBox="0 0 32 32"><circle cx="16" cy="16" r="15.2" fill="#b6b6b6" stroke="#aaa" stroke-width="1.2"/><circle cx="16" cy="16" r="13.2" fill="none" stroke="#c8b49a" stroke-width="0.8" stroke-dasharray="2.2 2.2"/><polygon points="8.2,24.8 9.5,19.2 13.8,23.5" fill="#fff"/><polygon points="10.6,18.2 18.4,10.4 22.6,14.6 14.8,22.4" fill="#fff"/><polygon points="19.6,9.2 21.3,7.6 25.4,11.7 23.8,13.4" fill="#fff"/></svg>
<div style="position:absolute;left:2789px;top:526.5px;width:38px;height:29.5px;border:2px solid #777;"></div>
<div style="position:absolute;left:2807px;top:526.5px;width:2px;height:29.5px;background:#777;"></div>
<div style="position:absolute;left:2849px;top:516px;width:76px;height:48px;background:linear-gradient(#ececec,#d6d6d6);"></div>
<div style="position:absolute;top:528.28px;height:26.81px;line-height:26.81px;font-size:24px;color:#111;font-weight:normal;font-style:normal;letter-spacing:0.4px;white-space:pre;-webkit-text-stroke:0.35px #111;left:2285.80px;width:1200px;text-align:center;">Open</div>
<div style="position:absolute;left:146px;top:566px;width:2779px;height:50px;background:#ffffff;"></div>
<div style="position:absolute;left:145px;top:566px;width:40px;height:50px;background:#98b3f7;"></div>
<div style="position:absolute;left:184px;top:566px;width:2px;height:50px;background:#999;"></div>
<div style="position:absolute;left:344px;top:566px;width:2px;height:50px;background:#999;"></div>
<div style="position:absolute;left:504px;top:566px;width:2px;height:50px;background:#999;"></div>
<div style="position:absolute;left:664px;top:566px;width:2px;height:50px;background:#999;"></div>
<div style="position:absolute;left:824px;top:566px;width:2px;height:50px;background:#999;"></div>
<div style="position:absolute;left:1505px;top:566px;width:2px;height:50px;background:#999;"></div>
<div style="position:absolute;left:2184px;top:566px;width:2px;height:50px;background:#999;"></div>
<div style="position:absolute;left:2364px;top:566px;width:2px;height:50px;background:#999;"></div>
<div style="position:absolute;left:2542px;top:566px;width:2px;height:50px;background:#999;"></div>
<div style="position:absolute;left:2722px;top:566px;width:2px;height:50px;background:#999;"></div>
<div style="position:absolute;left:2768px;top:566px;width:2px;height:50px;background:#999;"></div>
<div style="position:absolute;left:2846px;top:566px;width:2px;height:50px;background:#999;"></div>
<div style="position:absolute;left:146px;top:614px;width:2779px;height:2px;background:#999;"></div>
<div style="position:absolute;top:580.69px;height:24.57px;line-height:24.57px;font-size:22px;color:#111;font-weight:normal;font-style:normal;letter-spacing:1.0px;white-space:pre;-webkit-text-stroke:0.35px #111;left:-434.50px;width:1200px;text-align:center;">SI</div>
<div style="position:absolute;top:580.69px;height:24.57px;line-height:24.57px;font-size:22px;color:#111;font-weight:normal;font-style:normal;letter-spacing:2.4px;white-space:pre;-webkit-text-stroke:0.35px #111;left:-862.60px;width:1200px;text-align:right;">1009</div>
<div style="position:absolute;top:580.69px;height:24.57px;line-height:24.57px;font-size:22px;color:#111;font-weight:normal;font-style:normal;letter-spacing:2.4px;white-space:pre;-webkit-text-stroke:0.35px #111;left:-173.80px;width:1200px;text-align:center;">23/02/2016</div>
<div style="position:absolute;top:580.69px;height:24.57px;line-height:24.57px;font-size:22px;color:#111;font-weight:normal;font-style:normal;letter-spacing:2.4px;white-space:pre;-webkit-text-stroke:0.35px #111;left:-13.80px;width:1200px;text-align:center;">23/02/2016</div>
<div style="position:absolute;top:580.69px;height:24.57px;line-height:24.57px;font-size:22px;color:#111;font-weight:normal;font-style:normal;letter-spacing:1.3px;white-space:pre;-webkit-text-stroke:0.35px #111;left:145.65px;width:1200px;text-align:center;">LX07 RHU</div>
<div style="position:absolute;top:580.69px;height:24.57px;line-height:24.57px;font-size:22px;color:#111;font-weight:normal;font-style:normal;letter-spacing:1.3px;white-space:pre;-webkit-text-stroke:0.35px #111;left:835.00px;">Ford Focus Zetec Climate</div>
<div style="position:absolute;top:580.69px;height:24.57px;line-height:24.57px;font-size:22px;color:#111;font-weight:normal;font-style:normal;letter-spacing:1.3px;white-space:pre;-webkit-text-stroke:0.35px #111;left:1517.50px;">Mr P Edwards</div>
<div style="position:absolute;top:580.69px;height:24.57px;line-height:24.57px;font-size:22px;color:#111;font-weight:normal;font-style:normal;letter-spacing:2.0px;white-space:pre;-webkit-text-stroke:0.35px #111;left:1161.00px;width:1200px;text-align:right;">48.00</div>
<div style="position:absolute;top:580.69px;height:24.57px;line-height:24.57px;font-size:22px;color:#111;font-weight:normal;font-style:normal;letter-spacing:1.3px;white-space:pre;-webkit-text-stroke:0.35px #111;left:2376.50px;">Cash</div>
<svg style="position:absolute;left:2505px;top:571px" width="40.0" height="38.0" viewBox="0 0 40 38"><path d="M14.5 9 H10 V31 H28 V24" stroke="#999" stroke-width="2" fill="none"/><path d="M18 8 H30 V20" stroke="#999" stroke-width="2" fill="none"/><path d="M21 11 L17.5 18 L21 23 L29 14" stroke="#a8a8a8" stroke-width="2.2" fill="none"/></svg>
<svg style="position:absolute;left:2730px;top:574px" width="32" height="32" viewBox="0 0 32 32"><circle cx="16" cy="16" r="14.5" fill="#67ac3a" stroke="#aaa" stroke-width="2"/><path d="M9.5 16.5 L14 20.5 L22.5 11.5" fill="none" stroke="#fff" stroke-width="3.2"/></svg>
<div style="position:absolute;left:2789px;top:576.5px;width:38px;height:29.5px;border:2px solid #777;"></div>
<div style="position:absolute;left:2807px;top:576.5px;width:2px;height:29.5px;background:#777;"></div>
<div style="position:absolute;left:2849px;top:566px;width:76px;height:48px;background:linear-gradient(#ececec,#d6d6d6);"></div>
<div style="position:absolute;top:578.28px;height:26.81px;line-height:26.81px;font-size:24px;color:#111;font-weight:normal;font-style:normal;letter-spacing:0.4px;white-space:pre;-webkit-text-stroke:0.35px #111;left:2285.80px;width:1200px;text-align:center;">Open</div>
<div style="position:absolute;left:146px;top:616px;width:2779px;height:50px;background:#ffffff;"></div>
<div style="position:absolute;left:145px;top:616px;width:40px;height:50px;background:#98b3f7;"></div>
<div style="position:absolute;left:185px;top:616px;width:160px;height:50px;background:#fffadc;"></div>
<div style="position:absolute;left:184px;top:616px;width:2px;height:50px;background:#999;"></div>
<div style="position:absolute;left:344px;top:616px;width:2px;height:50px;background:#999;"></div>
<div style="position:absolute;left:504px;top:616px;width:2px;height:50px;background:#999;"></div>
<div style="position:absolute;left:664px;top:616px;width:2px;height:50px;background:#999;"></div>
<div style="position:absolute;left:824px;top:616px;width:2px;height:50px;background:#999;"></div>
<div style="position:absolute;left:1505px;top:616px;width:2px;height:50px;background:#999;"></div>
<div style="position:absolute;left:2184px;top:616px;width:2px;height:50px;background:#999;"></div>
<div style="position:absolute;left:2364px;top:616px;width:2px;height:50px;background:#999;"></div>
<div style="position:absolute;left:2542px;top:616px;width:2px;height:50px;background:#999;"></div>
<div style="position:absolute;left:2722px;top:616px;width:2px;height:50px;background:#999;"></div>
<div style="position:absolute;left:2768px;top:616px;width:2px;height:50px;background:#999;"></div>
<div style="position:absolute;left:2846px;top:616px;width:2px;height:50px;background:#999;"></div>
<div style="position:absolute;left:146px;top:664px;width:2779px;height:2px;background:#999;"></div>
<div style="position:absolute;top:630.69px;height:24.57px;line-height:24.57px;font-size:22px;color:#111;font-weight:normal;font-style:normal;letter-spacing:1.0px;white-space:pre;-webkit-text-stroke:0.35px #111;left:-434.50px;width:1200px;text-align:center;">SI</div>
<div style="position:absolute;top:630.69px;height:24.57px;line-height:24.57px;font-size:22px;color:#111;font-weight:normal;font-style:normal;letter-spacing:2.4px;white-space:pre;-webkit-text-stroke:0.35px #111;left:-862.60px;width:1200px;text-align:right;">1008</div>
<div style="position:absolute;top:630.69px;height:24.57px;line-height:24.57px;font-size:22px;color:#111;font-weight:normal;font-style:normal;letter-spacing:2.4px;white-space:pre;-webkit-text-stroke:0.35px #111;left:-173.80px;width:1200px;text-align:center;">22/02/2016</div>
<div style="position:absolute;top:630.69px;height:24.57px;line-height:24.57px;font-size:22px;color:#111;font-weight:normal;font-style:normal;letter-spacing:2.4px;white-space:pre;-webkit-text-stroke:0.35px #111;left:-13.80px;width:1200px;text-align:center;">22/02/2016</div>
<div style="position:absolute;top:630.69px;height:24.57px;line-height:24.57px;font-size:22px;color:#111;font-weight:normal;font-style:normal;letter-spacing:1.3px;white-space:pre;-webkit-text-stroke:0.35px #111;left:145.65px;width:1200px;text-align:center;">GU5 3UK</div>
<div style="position:absolute;top:630.69px;height:24.57px;line-height:24.57px;font-size:22px;color:#111;font-weight:normal;font-style:normal;letter-spacing:1.3px;white-space:pre;-webkit-text-stroke:0.35px #111;left:835.00px;">Ford Focus</div>
<div style="position:absolute;top:630.69px;height:24.57px;line-height:24.57px;font-size:22px;color:#111;font-weight:normal;font-style:normal;letter-spacing:1.3px;white-space:pre;-webkit-text-stroke:0.35px #111;left:1517.50px;">SWS Solutions (UK) Ltd</div>
<div style="position:absolute;top:630.69px;height:24.57px;line-height:24.57px;font-size:22px;color:#111;font-weight:normal;font-style:normal;letter-spacing:2.0px;white-space:pre;-webkit-text-stroke:0.35px #111;left:1161.00px;width:1200px;text-align:right;">1,582.75</div>
<div style="position:absolute;top:630.69px;height:24.57px;line-height:24.57px;font-size:22px;color:#111;font-weight:normal;font-style:normal;letter-spacing:1.3px;white-space:pre;-webkit-text-stroke:0.35px #111;left:2376.50px;">Partial</div>
<svg style="position:absolute;left:2505px;top:621px" width="40.0" height="38.0" viewBox="0 0 40 38"><path d="M14.5 9 H10 V31 H28 V24" stroke="#999" stroke-width="2" fill="none"/><path d="M18 8 H30 V20" stroke="#999" stroke-width="2" fill="none"/><path d="M21 11 L17.5 18 L21 23 L29 14" stroke="#a8a8a8" stroke-width="2.2" fill="none"/></svg>
<div style="position:absolute;top:630.69px;height:24.57px;line-height:24.57px;font-size:22px;color:#111;font-weight:normal;font-style:normal;letter-spacing:2.0px;white-space:pre;-webkit-text-stroke:0.35px #111;left:1519.40px;width:1200px;text-align:right;">1,332.75</div>
<svg style="position:absolute;left:2730px;top:624px" width="32" height="32" viewBox="0 0 32 32"><circle cx="16" cy="16" r="14.5" fill="#d8161a" stroke="#aaa" stroke-width="2"/><path d="M11 11 L21 21 M21 11 L11 21" fill="none" stroke="#fff" stroke-width="3.6"/></svg>
<div style="position:absolute;left:2789px;top:626.5px;width:38px;height:29.5px;border:2px solid #777;"></div>
<div style="position:absolute;left:2807px;top:626.5px;width:2px;height:29.5px;background:#777;"></div>
<div style="position:absolute;left:2849px;top:616px;width:76px;height:48px;background:linear-gradient(#ececec,#d6d6d6);"></div>
<div style="position:absolute;top:628.28px;height:26.81px;line-height:26.81px;font-size:24px;color:#111;font-weight:normal;font-style:normal;letter-spacing:0.4px;white-space:pre;-webkit-text-stroke:0.35px #111;left:2285.80px;width:1200px;text-align:center;">Open</div>
<div style="position:absolute;left:146px;top:666px;width:2779px;height:50px;background:#e8e8e8;"></div>
<div style="position:absolute;left:145px;top:666px;width:40px;height:50px;background:#98b3f7;"></div>
<div style="position:absolute;left:185px;top:666px;width:160px;height:50px;background:#fffadc;"></div>
<div style="position:absolute;left:184px;top:666px;width:2px;height:50px;background:#999;"></div>
<div style="position:absolute;left:344px;top:666px;width:2px;height:50px;background:#999;"></div>
<div style="position:absolute;left:504px;top:666px;width:2px;height:50px;background:#999;"></div>
<div style="position:absolute;left:664px;top:666px;width:2px;height:50px;background:#999;"></div>
<div style="position:absolute;left:824px;top:666px;width:2px;height:50px;background:#999;"></div>
<div style="position:absolute;left:1505px;top:666px;width:2px;height:50px;background:#999;"></div>
<div style="position:absolute;left:2184px;top:666px;width:2px;height:50px;background:#999;"></div>
<div style="position:absolute;left:2364px;top:666px;width:2px;height:50px;background:#999;"></div>
<div style="position:absolute;left:2542px;top:666px;width:2px;height:50px;background:#999;"></div>
<div style="position:absolute;left:2722px;top:666px;width:2px;height:50px;background:#999;"></div>
<div style="position:absolute;left:2768px;top:666px;width:2px;height:50px;background:#999;"></div>
<div style="position:absolute;left:2846px;top:666px;width:2px;height:50px;background:#999;"></div>
<div style="position:absolute;left:146px;top:714px;width:2779px;height:2px;background:#999;"></div>
<div style="position:absolute;top:680.69px;height:24.57px;line-height:24.57px;font-size:22px;color:#111;font-weight:normal;font-style:normal;letter-spacing:1.0px;white-space:pre;-webkit-text-stroke:0.35px #111;left:-434.50px;width:1200px;text-align:center;">SI</div>
<div style="position:absolute;top:680.69px;height:24.57px;line-height:24.57px;font-size:22px;color:#111;font-weight:normal;font-style:normal;letter-spacing:2.4px;white-space:pre;-webkit-text-stroke:0.35px #111;left:-862.60px;width:1200px;text-align:right;">1007</div>
<div style="position:absolute;top:680.69px;height:24.57px;line-height:24.57px;font-size:22px;color:#111;font-weight:normal;font-style:normal;letter-spacing:2.4px;white-space:pre;-webkit-text-stroke:0.35px #111;left:-173.80px;width:1200px;text-align:center;">22/02/2016</div>
<div style="position:absolute;top:680.69px;height:24.57px;line-height:24.57px;font-size:22px;color:#111;font-weight:normal;font-style:normal;letter-spacing:2.4px;white-space:pre;-webkit-text-stroke:0.35px #111;left:-13.80px;width:1200px;text-align:center;">22/02/2016</div>
<div style="position:absolute;top:680.69px;height:24.57px;line-height:24.57px;font-size:22px;color:#111;font-weight:normal;font-style:normal;letter-spacing:1.3px;white-space:pre;-webkit-text-stroke:0.35px #111;left:145.65px;width:1200px;text-align:center;">S6 DTF</div>
<div style="position:absolute;top:680.69px;height:24.57px;line-height:24.57px;font-size:22px;color:#111;font-weight:normal;font-style:normal;letter-spacing:1.3px;white-space:pre;-webkit-text-stroke:0.35px #111;left:835.00px;">Audi RS4</div>
<div style="position:absolute;top:680.69px;height:24.57px;line-height:24.57px;font-size:22px;color:#111;font-weight:normal;font-style:normal;letter-spacing:1.3px;white-space:pre;-webkit-text-stroke:0.35px #111;left:1517.50px;">SWS Solutions (UK) Ltd</div>
<div style="position:absolute;top:680.69px;height:24.57px;line-height:24.57px;font-size:22px;color:#111;font-weight:normal;font-style:normal;letter-spacing:2.0px;white-space:pre;-webkit-text-stroke:0.35px #111;left:1161.00px;width:1200px;text-align:right;">993.60</div>
<div style="position:absolute;top:680.69px;height:24.57px;line-height:24.57px;font-size:22px;color:#111;font-weight:normal;font-style:normal;letter-spacing:1.3px;white-space:pre;-webkit-text-stroke:0.35px #111;left:2376.50px;">Partial</div>
<svg style="position:absolute;left:2505px;top:671px" width="40.0" height="38.0" viewBox="0 0 40 38"><path d="M14.5 9 H10 V31 H28 V24" stroke="#999" stroke-width="2" fill="none"/><path d="M18 8 H30 V20" stroke="#999" stroke-width="2" fill="none"/><path d="M21 11 L17.5 18 L21 23 L29 14" stroke="#a8a8a8" stroke-width="2.2" fill="none"/></svg>
<div style="position:absolute;top:680.69px;height:24.57px;line-height:24.57px;font-size:22px;color:#111;font-weight:normal;font-style:normal;letter-spacing:2.0px;white-space:pre;-webkit-text-stroke:0.35px #111;left:1519.40px;width:1200px;text-align:right;">443.60</div>
<svg style="position:absolute;left:2730px;top:674px" width="32" height="32" viewBox="0 0 32 32"><circle cx="16" cy="16" r="14.5" fill="#d8161a" stroke="#aaa" stroke-width="2"/><path d="M11 11 L21 21 M21 11 L11 21" fill="none" stroke="#fff" stroke-width="3.6"/></svg>
<div style="position:absolute;left:2789px;top:676.5px;width:38px;height:29.5px;border:2px solid #777;"></div>
<div style="position:absolute;left:2807px;top:676.5px;width:2px;height:29.5px;background:#777;"></div>
<div style="position:absolute;left:2849px;top:666px;width:76px;height:48px;background:linear-gradient(#ececec,#d6d6d6);"></div>
<div style="position:absolute;top:678.28px;height:26.81px;line-height:26.81px;font-size:24px;color:#111;font-weight:normal;font-style:normal;letter-spacing:0.4px;white-space:pre;-webkit-text-stroke:0.35px #111;left:2285.80px;width:1200px;text-align:center;">Open</div>
<div style="position:absolute;left:146px;top:716px;width:2779px;height:50px;background:#c3ebf9;"></div>
<div style="position:absolute;left:145px;top:716px;width:40px;height:50px;background:#98b3f7;"></div>
<div style="position:absolute;left:184px;top:716px;width:2px;height:50px;background:#999;"></div>
<div style="position:absolute;left:344px;top:716px;width:2px;height:50px;background:#999;"></div>
<div style="position:absolute;left:504px;top:716px;width:2px;height:50px;background:#999;"></div>
<div style="position:absolute;left:664px;top:716px;width:2px;height:50px;background:#999;"></div>
<div style="position:absolute;left:824px;top:716px;width:2px;height:50px;background:#999;"></div>
<div style="position:absolute;left:1505px;top:716px;width:2px;height:50px;background:#999;"></div>
<div style="position:absolute;left:2184px;top:716px;width:2px;height:50px;background:#999;"></div>
<div style="position:absolute;left:2364px;top:716px;width:2px;height:50px;background:#999;"></div>
<div style="position:absolute;left:2542px;top:716px;width:2px;height:50px;background:#999;"></div>
<div style="position:absolute;left:2722px;top:716px;width:2px;height:50px;background:#999;"></div>
<div style="position:absolute;left:2768px;top:716px;width:2px;height:50px;background:#999;"></div>
<div style="position:absolute;left:2846px;top:716px;width:2px;height:50px;background:#999;"></div>
<div style="position:absolute;left:146px;top:764px;width:2779px;height:2px;background:#999;"></div>
<div style="position:absolute;top:730.69px;height:24.57px;line-height:24.57px;font-size:22px;color:#111;font-weight:normal;font-style:normal;letter-spacing:1.0px;white-space:pre;-webkit-text-stroke:0.35px #111;left:-434.50px;width:1200px;text-align:center;">SI</div>
<div style="position:absolute;top:730.69px;height:24.57px;line-height:24.57px;font-size:22px;color:#111;font-weight:normal;font-style:normal;letter-spacing:2.4px;white-space:pre;-webkit-text-stroke:0.35px #111;left:-862.60px;width:1200px;text-align:right;">1006</div>
<div style="position:absolute;top:730.69px;height:24.57px;line-height:24.57px;font-size:22px;color:#111;font-weight:normal;font-style:normal;letter-spacing:2.4px;white-space:pre;-webkit-text-stroke:0.35px #111;left:-173.80px;width:1200px;text-align:center;">17/02/2016</div>
<div style="position:absolute;top:730.69px;height:24.57px;line-height:24.57px;font-size:22px;color:#111;font-weight:normal;font-style:normal;letter-spacing:2.4px;white-space:pre;-webkit-text-stroke:0.35px #111;left:-13.80px;width:1200px;text-align:center;">21/02/2016</div>
<div style="position:absolute;top:730.69px;height:24.57px;line-height:24.57px;font-size:22px;color:#111;font-weight:normal;font-style:normal;letter-spacing:1.3px;white-space:pre;-webkit-text-stroke:0.35px #111;left:145.65px;width:1200px;text-align:center;">ST53 AMY</div>
<div style="position:absolute;top:730.69px;height:24.57px;line-height:24.57px;font-size:22px;color:#111;font-weight:normal;font-style:normal;letter-spacing:1.3px;white-space:pre;-webkit-text-stroke:0.35px #111;left:835.00px;">Land Rover Range Rover Sport V8 S/C Premium Edition</div>
<div style="position:absolute;top:730.69px;height:24.57px;line-height:24.57px;font-size:22px;color:#111;font-weight:normal;font-style:normal;letter-spacing:1.3px;white-space:pre;-webkit-text-stroke:0.35px #111;left:1517.50px;">Miss A Spencer</div>
<div style="position:absolute;top:730.69px;height:24.57px;line-height:24.57px;font-size:22px;color:#111;font-weight:normal;font-style:normal;letter-spacing:2.0px;white-space:pre;-webkit-text-stroke:0.35px #111;left:1161.00px;width:1200px;text-align:right;">1,218.71</div>
<div style="position:absolute;top:730.69px;height:24.57px;line-height:24.57px;font-size:22px;color:#111;font-weight:normal;font-style:normal;letter-spacing:1.3px;white-space:pre;-webkit-text-stroke:0.35px #111;left:2376.50px;">Multiple</div>
<svg style="position:absolute;left:2505px;top:721px" width="40.0" height="38.0" viewBox="0 0 40 38"><path d="M14.5 9 H10 V31 H28 V24" stroke="#999" stroke-width="2" fill="none"/><path d="M18 8 H30 V20" stroke="#999" stroke-width="2" fill="none"/><path d="M21 11 L17.5 18 L21 23 L29 14" stroke="#a8a8a8" stroke-width="2.2" fill="none"/></svg>
<svg style="position:absolute;left:2730px;top:724px" width="32" height="32" viewBox="0 0 32 32"><circle cx="16" cy="16" r="14.5" fill="#67ac3a" stroke="#aaa" stroke-width="2"/><path d="M9.5 16.5 L14 20.5 L22.5 11.5" fill="none" stroke="#fff" stroke-width="3.2"/></svg>
<div style="position:absolute;left:2789px;top:726.5px;width:38px;height:29.5px;border:2px solid #777;"></div>
<div style="position:absolute;left:2807px;top:726.5px;width:2px;height:29.5px;background:#777;"></div>
<div style="position:absolute;left:2849px;top:716px;width:76px;height:48px;background:linear-gradient(#ececec,#d6d6d6);"></div>
<div style="position:absolute;top:728.28px;height:26.81px;line-height:26.81px;font-size:24px;color:#111;font-weight:normal;font-style:normal;letter-spacing:0.4px;white-space:pre;-webkit-text-stroke:0.35px #111;left:2285.80px;width:1200px;text-align:center;">Open</div>
<div style="position:absolute;left:146px;top:766px;width:2779px;height:50px;background:#ffffff;"></div>
<div style="position:absolute;left:145px;top:766px;width:40px;height:50px;background:#98b3f7;"></div>
<div style="position:absolute;left:184px;top:766px;width:2px;height:50px;background:#999;"></div>
<div style="position:absolute;left:344px;top:766px;width:2px;height:50px;background:#999;"></div>
<div style="position:absolute;left:504px;top:766px;width:2px;height:50px;background:#999;"></div>
<div style="position:absolute;left:664px;top:766px;width:2px;height:50px;background:#999;"></div>
<div style="position:absolute;left:824px;top:766px;width:2px;height:50px;background:#999;"></div>
<div style="position:absolute;left:1505px;top:766px;width:2px;height:50px;background:#999;"></div>
<div style="position:absolute;left:2184px;top:766px;width:2px;height:50px;background:#999;"></div>
<div style="position:absolute;left:2364px;top:766px;width:2px;height:50px;background:#999;"></div>
<div style="position:absolute;left:2542px;top:766px;width:2px;height:50px;background:#999;"></div>
<div style="position:absolute;left:2722px;top:766px;width:2px;height:50px;background:#999;"></div>
<div style="position:absolute;left:2768px;top:766px;width:2px;height:50px;background:#999;"></div>
<div style="position:absolute;left:2846px;top:766px;width:2px;height:50px;background:#999;"></div>
<div style="position:absolute;left:146px;top:814px;width:2779px;height:2px;background:#999;"></div>
<div style="position:absolute;top:780.69px;height:24.57px;line-height:24.57px;font-size:22px;color:#111;font-weight:normal;font-style:normal;letter-spacing:1.0px;white-space:pre;-webkit-text-stroke:0.35px #111;left:-434.50px;width:1200px;text-align:center;">SI</div>
<div style="position:absolute;top:780.69px;height:24.57px;line-height:24.57px;font-size:22px;color:#111;font-weight:normal;font-style:normal;letter-spacing:2.4px;white-space:pre;-webkit-text-stroke:0.35px #111;left:-862.60px;width:1200px;text-align:right;">1005</div>
<div style="position:absolute;top:780.69px;height:24.57px;line-height:24.57px;font-size:22px;color:#111;font-weight:normal;font-style:normal;letter-spacing:2.4px;white-space:pre;-webkit-text-stroke:0.35px #111;left:-173.80px;width:1200px;text-align:center;">16/02/2016</div>
<div style="position:absolute;top:780.69px;height:24.57px;line-height:24.57px;font-size:22px;color:#111;font-weight:normal;font-style:normal;letter-spacing:2.4px;white-space:pre;-webkit-text-stroke:0.35px #111;left:-13.80px;width:1200px;text-align:center;">18/02/2016</div>
<div style="position:absolute;top:780.69px;height:24.57px;line-height:24.57px;font-size:22px;color:#111;font-weight:normal;font-style:normal;letter-spacing:1.3px;white-space:pre;-webkit-text-stroke:0.35px #111;left:145.65px;width:1200px;text-align:center;">BH6 DWP</div>
<div style="position:absolute;top:780.69px;height:24.57px;line-height:24.57px;font-size:22px;color:#111;font-weight:normal;font-style:normal;letter-spacing:1.3px;white-space:pre;-webkit-text-stroke:0.35px #111;left:835.00px;">Nissan X-Trail</div>
<div style="position:absolute;top:780.69px;height:24.57px;line-height:24.57px;font-size:22px;color:#111;font-weight:normal;font-style:normal;letter-spacing:1.3px;white-space:pre;-webkit-text-stroke:0.35px #111;left:1517.50px;">Mr Liam Wentworth</div>
<div style="position:absolute;top:780.69px;height:24.57px;line-height:24.57px;font-size:22px;color:#111;font-weight:normal;font-style:normal;letter-spacing:2.0px;white-space:pre;-webkit-text-stroke:0.35px #111;left:1161.00px;width:1200px;text-align:right;">122.60</div>
<div style="position:absolute;top:780.69px;height:24.57px;line-height:24.57px;font-size:22px;color:#111;font-weight:normal;font-style:normal;letter-spacing:1.3px;white-space:pre;-webkit-text-stroke:0.35px #111;left:2376.50px;">Multiple</div>
<svg style="position:absolute;left:2505px;top:771px" width="40.0" height="38.0" viewBox="0 0 40 38"><path d="M14.5 9 H10 V31 H28 V24" stroke="#999" stroke-width="2" fill="none"/><path d="M18 8 H30 V20" stroke="#999" stroke-width="2" fill="none"/><path d="M21 11 L17.5 18 L21 23 L29 14" stroke="#a8a8a8" stroke-width="2.2" fill="none"/></svg>
<svg style="position:absolute;left:2730px;top:774px" width="32" height="32" viewBox="0 0 32 32"><circle cx="16" cy="16" r="14.5" fill="#67ac3a" stroke="#aaa" stroke-width="2"/><path d="M9.5 16.5 L14 20.5 L22.5 11.5" fill="none" stroke="#fff" stroke-width="3.2"/></svg>
<div style="position:absolute;left:2789px;top:776.5px;width:38px;height:29.5px;border:2px solid #777;"></div>
<div style="position:absolute;left:2807px;top:776.5px;width:2px;height:29.5px;background:#777;"></div>
<div style="position:absolute;left:2849px;top:766px;width:76px;height:48px;background:linear-gradient(#ececec,#d6d6d6);"></div>
<div style="position:absolute;top:778.28px;height:26.81px;line-height:26.81px;font-size:24px;color:#111;font-weight:normal;font-style:normal;letter-spacing:0.4px;white-space:pre;-webkit-text-stroke:0.35px #111;left:2285.80px;width:1200px;text-align:center;">Open</div>
<div style="position:absolute;left:146px;top:816px;width:2779px;height:50px;background:#e8e8e8;"></div>
<div style="position:absolute;left:145px;top:816px;width:40px;height:50px;background:#98b3f7;"></div>
<div style="position:absolute;left:184px;top:816px;width:2px;height:50px;background:#999;"></div>
<div style="position:absolute;left:344px;top:816px;width:2px;height:50px;background:#999;"></div>
<div style="position:absolute;left:504px;top:816px;width:2px;height:50px;background:#999;"></div>
<div style="position:absolute;left:664px;top:816px;width:2px;height:50px;background:#999;"></div>
<div style="position:absolute;left:824px;top:816px;width:2px;height:50px;background:#999;"></div>
<div style="position:absolute;left:1505px;top:816px;width:2px;height:50px;background:#999;"></div>
<div style="position:absolute;left:2184px;top:816px;width:2px;height:50px;background:#999;"></div>
<div style="position:absolute;left:2364px;top:816px;width:2px;height:50px;background:#999;"></div>
<div style="position:absolute;left:2542px;top:816px;width:2px;height:50px;background:#999;"></div>
<div style="position:absolute;left:2722px;top:816px;width:2px;height:50px;background:#999;"></div>
<div style="position:absolute;left:2768px;top:816px;width:2px;height:50px;background:#999;"></div>
<div style="position:absolute;left:2846px;top:816px;width:2px;height:50px;background:#999;"></div>
<div style="position:absolute;left:146px;top:864px;width:2779px;height:2px;background:#999;"></div>
<div style="position:absolute;top:830.69px;height:24.57px;line-height:24.57px;font-size:22px;color:#111;font-weight:normal;font-style:normal;letter-spacing:1.0px;white-space:pre;-webkit-text-stroke:0.35px #111;left:-434.50px;width:1200px;text-align:center;">SI</div>
<div style="position:absolute;top:830.69px;height:24.57px;line-height:24.57px;font-size:22px;color:#111;font-weight:normal;font-style:normal;letter-spacing:2.4px;white-space:pre;-webkit-text-stroke:0.35px #111;left:-862.60px;width:1200px;text-align:right;">1004</div>
<div style="position:absolute;top:830.69px;height:24.57px;line-height:24.57px;font-size:22px;color:#111;font-weight:normal;font-style:normal;letter-spacing:2.4px;white-space:pre;-webkit-text-stroke:0.35px #111;left:-173.80px;width:1200px;text-align:center;">16/02/2016</div>
<div style="position:absolute;top:830.69px;height:24.57px;line-height:24.57px;font-size:22px;color:#999;font-weight:normal;font-style:normal;letter-spacing:1.3px;white-space:pre;-webkit-text-stroke:0.35px #999;left:-14.35px;width:1200px;text-align:center;">Pending</div>
<div style="position:absolute;top:830.69px;height:24.57px;line-height:24.57px;font-size:22px;color:#111;font-weight:normal;font-style:normal;letter-spacing:1.3px;white-space:pre;-webkit-text-stroke:0.35px #111;left:145.65px;width:1200px;text-align:center;">H3 AWR</div>
<div style="position:absolute;top:830.69px;height:24.57px;line-height:24.57px;font-size:22px;color:#111;font-weight:normal;font-style:normal;letter-spacing:1.3px;white-space:pre;-webkit-text-stroke:0.35px #111;left:835.00px;">Skoda Fabia</div>
<div style="position:absolute;top:830.69px;height:24.57px;line-height:24.57px;font-size:22px;color:#111;font-weight:normal;font-style:normal;letter-spacing:1.3px;white-space:pre;-webkit-text-stroke:0.35px #111;left:1517.50px;">Ms Alice Gerrad</div>
<div style="position:absolute;top:830.69px;height:24.57px;line-height:24.57px;font-size:22px;color:#888;font-weight:normal;font-style:normal;letter-spacing:2.0px;white-space:pre;-webkit-text-stroke:0.35px #888;left:1161.00px;width:1200px;text-align:right;">50.00</div>
<div style="position:absolute;top:830.69px;height:24.57px;line-height:24.57px;font-size:22px;color:#888;font-weight:normal;font-style:normal;letter-spacing:2.0px;white-space:pre;-webkit-text-stroke:0.35px #888;left:1519.40px;width:1200px;text-align:right;">50.00</div>
<svg style="position:absolute;left:2730px;top:824px" width="32" height="32" viewBox="0 0 32 32"><circle cx="16" cy="16" r="15.2" fill="#b6b6b6" stroke="#aaa" stroke-width="1.2"/><circle cx="16" cy="16" r="13.2" fill="none" stroke="#c8b49a" stroke-width="0.8" stroke-dasharray="2.2 2.2"/><polygon points="8.2,24.8 9.5,19.2 13.8,23.5" fill="#fff"/><polygon points="10.6,18.2 18.4,10.4 22.6,14.6 14.8,22.4" fill="#fff"/><polygon points="19.6,9.2 21.3,7.6 25.4,11.7 23.8,13.4" fill="#fff"/></svg>
<div style="position:absolute;left:2789px;top:826.5px;width:38px;height:29.5px;border:2px solid #777;"></div>
<div style="position:absolute;left:2807px;top:826.5px;width:2px;height:29.5px;background:#777;"></div>
<div style="position:absolute;left:2849px;top:816px;width:76px;height:48px;background:linear-gradient(#ececec,#d6d6d6);"></div>
<div style="position:absolute;top:828.28px;height:26.81px;line-height:26.81px;font-size:24px;color:#111;font-weight:normal;font-style:normal;letter-spacing:0.4px;white-space:pre;-webkit-text-stroke:0.35px #111;left:2285.80px;width:1200px;text-align:center;">Open</div>
<div style="position:absolute;left:146px;top:866px;width:2779px;height:50px;background:#ffffff;"></div>
<div style="position:absolute;left:145px;top:866px;width:40px;height:50px;background:#98b3f7;"></div>
<div style="position:absolute;left:184px;top:866px;width:2px;height:50px;background:#999;"></div>
<div style="position:absolute;left:344px;top:866px;width:2px;height:50px;background:#999;"></div>
<div style="position:absolute;left:504px;top:866px;width:2px;height:50px;background:#999;"></div>
<div style="position:absolute;left:664px;top:866px;width:2px;height:50px;background:#999;"></div>
<div style="position:absolute;left:824px;top:866px;width:2px;height:50px;background:#999;"></div>
<div style="position:absolute;left:1505px;top:866px;width:2px;height:50px;background:#999;"></div>
<div style="position:absolute;left:2184px;top:866px;width:2px;height:50px;background:#999;"></div>
<div style="position:absolute;left:2364px;top:866px;width:2px;height:50px;background:#999;"></div>
<div style="position:absolute;left:2542px;top:866px;width:2px;height:50px;background:#999;"></div>
<div style="position:absolute;left:2722px;top:866px;width:2px;height:50px;background:#999;"></div>
<div style="position:absolute;left:2768px;top:866px;width:2px;height:50px;background:#999;"></div>
<div style="position:absolute;left:2846px;top:866px;width:2px;height:50px;background:#999;"></div>
<div style="position:absolute;left:146px;top:914px;width:2779px;height:2px;background:#999;"></div>
<div style="position:absolute;top:880.69px;height:24.57px;line-height:24.57px;font-size:22px;color:#111;font-weight:normal;font-style:normal;letter-spacing:1.0px;white-space:pre;-webkit-text-stroke:0.35px #111;left:-434.50px;width:1200px;text-align:center;">SI</div>
<div style="position:absolute;top:880.69px;height:24.57px;line-height:24.57px;font-size:22px;color:#111;font-weight:normal;font-style:normal;letter-spacing:2.4px;white-space:pre;-webkit-text-stroke:0.35px #111;left:-862.60px;width:1200px;text-align:right;">1003</div>
<div style="position:absolute;top:880.69px;height:24.57px;line-height:24.57px;font-size:22px;color:#111;font-weight:normal;font-style:normal;letter-spacing:2.4px;white-space:pre;-webkit-text-stroke:0.35px #111;left:-173.80px;width:1200px;text-align:center;">16/02/2016</div>
<div style="position:absolute;top:880.69px;height:24.57px;line-height:24.57px;font-size:22px;color:#111;font-weight:normal;font-style:normal;letter-spacing:2.4px;white-space:pre;-webkit-text-stroke:0.35px #111;left:-13.80px;width:1200px;text-align:center;">18/02/2016</div>
<div style="position:absolute;top:880.69px;height:24.57px;line-height:24.57px;font-size:22px;color:#111;font-weight:normal;font-style:normal;letter-spacing:1.3px;white-space:pre;-webkit-text-stroke:0.35px #111;left:145.65px;width:1200px;text-align:center;">N56 FTR</div>
<div style="position:absolute;top:880.69px;height:24.57px;line-height:24.57px;font-size:22px;color:#111;font-weight:normal;font-style:normal;letter-spacing:1.3px;white-space:pre;-webkit-text-stroke:0.35px #111;left:835.00px;">Volvo 360</div>
<div style="position:absolute;top:880.69px;height:24.57px;line-height:24.57px;font-size:22px;color:#111;font-weight:normal;font-style:normal;letter-spacing:1.3px;white-space:pre;-webkit-text-stroke:0.35px #111;left:1517.50px;">Mrs Nora Sidaway</div>
<div style="position:absolute;top:880.69px;height:24.57px;line-height:24.57px;font-size:22px;color:#111;font-weight:normal;font-style:normal;letter-spacing:2.0px;white-space:pre;-webkit-text-stroke:0.35px #111;left:1161.00px;width:1200px;text-align:right;">50.00</div>
<div style="position:absolute;top:880.69px;height:24.57px;line-height:24.57px;font-size:22px;color:#111;font-weight:normal;font-style:normal;letter-spacing:1.3px;white-space:pre;-webkit-text-stroke:0.35px #111;left:2376.50px;">Cash</div>
<svg style="position:absolute;left:2505px;top:871px" width="40.0" height="38.0" viewBox="0 0 40 38"><path d="M14.5 9 H10 V31 H28 V24" stroke="#999" stroke-width="2" fill="none"/><path d="M18 8 H30 V20" stroke="#999" stroke-width="2" fill="none"/><path d="M21 11 L17.5 18 L21 23 L29 14" stroke="#a8a8a8" stroke-width="2.2" fill="none"/></svg>
<svg style="position:absolute;left:2730px;top:874px" width="32" height="32" viewBox="0 0 32 32"><circle cx="16" cy="16" r="14.5" fill="#67ac3a" stroke="#aaa" stroke-width="2"/><path d="M9.5 16.5 L14 20.5 L22.5 11.5" fill="none" stroke="#fff" stroke-width="3.2"/></svg>
<div style="position:absolute;left:2789px;top:876.5px;width:38px;height:29.5px;border:2px solid #777;"></div>
<div style="position:absolute;left:2807px;top:876.5px;width:2px;height:29.5px;background:#777;"></div>
<div style="position:absolute;left:2849px;top:866px;width:76px;height:48px;background:linear-gradient(#ececec,#d6d6d6);"></div>
<div style="position:absolute;top:878.28px;height:26.81px;line-height:26.81px;font-size:24px;color:#111;font-weight:normal;font-style:normal;letter-spacing:0.4px;white-space:pre;-webkit-text-stroke:0.35px #111;left:2285.80px;width:1200px;text-align:center;">Open</div>
<div style="position:absolute;left:146px;top:916px;width:2779px;height:50px;background:#ffffff;"></div>
<div style="position:absolute;left:145px;top:916px;width:40px;height:50px;background:#98b3f7;"></div>
<div style="position:absolute;left:184px;top:916px;width:2px;height:50px;background:#999;"></div>
<div style="position:absolute;left:344px;top:916px;width:2px;height:50px;background:#999;"></div>
<div style="position:absolute;left:504px;top:916px;width:2px;height:50px;background:#999;"></div>
<div style="position:absolute;left:664px;top:916px;width:2px;height:50px;background:#999;"></div>
<div style="position:absolute;left:824px;top:916px;width:2px;height:50px;background:#999;"></div>
<div style="position:absolute;left:1505px;top:916px;width:2px;height:50px;background:#999;"></div>
<div style="position:absolute;left:2184px;top:916px;width:2px;height:50px;background:#999;"></div>
<div style="position:absolute;left:2364px;top:916px;width:2px;height:50px;background:#999;"></div>
<div style="position:absolute;left:2542px;top:916px;width:2px;height:50px;background:#999;"></div>
<div style="position:absolute;left:2722px;top:916px;width:2px;height:50px;background:#999;"></div>
<div style="position:absolute;left:2768px;top:916px;width:2px;height:50px;background:#999;"></div>
<div style="position:absolute;left:2846px;top:916px;width:2px;height:50px;background:#999;"></div>
<div style="position:absolute;left:146px;top:964px;width:2779px;height:2px;background:#999;"></div>
<div style="position:absolute;top:930.69px;height:24.57px;line-height:24.57px;font-size:22px;color:#111;font-weight:normal;font-style:normal;letter-spacing:1.0px;white-space:pre;-webkit-text-stroke:0.35px #111;left:-434.50px;width:1200px;text-align:center;">SI</div>
<div style="position:absolute;top:930.69px;height:24.57px;line-height:24.57px;font-size:22px;color:#111;font-weight:normal;font-style:normal;letter-spacing:2.4px;white-space:pre;-webkit-text-stroke:0.35px #111;left:-862.60px;width:1200px;text-align:right;">1002</div>
<div style="position:absolute;top:930.69px;height:24.57px;line-height:24.57px;font-size:22px;color:#111;font-weight:normal;font-style:normal;letter-spacing:2.4px;white-space:pre;-webkit-text-stroke:0.35px #111;left:-173.80px;width:1200px;text-align:center;">16/02/2016</div>
<div style="position:absolute;top:930.69px;height:24.57px;line-height:24.57px;font-size:22px;color:#111;font-weight:normal;font-style:normal;letter-spacing:2.4px;white-space:pre;-webkit-text-stroke:0.35px #111;left:-13.80px;width:1200px;text-align:center;">18/02/2016</div>
<div style="position:absolute;top:930.69px;height:24.57px;line-height:24.57px;font-size:22px;color:#111;font-weight:normal;font-style:normal;letter-spacing:1.3px;white-space:pre;-webkit-text-stroke:0.35px #111;left:145.65px;width:1200px;text-align:center;">P2 CHB</div>
<div style="position:absolute;top:930.69px;height:24.57px;line-height:24.57px;font-size:22px;color:#111;font-weight:normal;font-style:normal;letter-spacing:1.3px;white-space:pre;-webkit-text-stroke:0.35px #111;left:835.00px;">Honda FR-V</div>
<div style="position:absolute;top:930.69px;height:24.57px;line-height:24.57px;font-size:22px;color:#111;font-weight:normal;font-style:normal;letter-spacing:1.3px;white-space:pre;-webkit-text-stroke:0.35px #111;left:1517.50px;">Mr Mike Hollings</div>
<div style="position:absolute;top:930.69px;height:24.57px;line-height:24.57px;font-size:22px;color:#111;font-weight:normal;font-style:normal;letter-spacing:2.0px;white-space:pre;-webkit-text-stroke:0.35px #111;left:1161.00px;width:1200px;text-align:right;">60.00</div>
<div style="position:absolute;top:930.69px;height:24.57px;line-height:24.57px;font-size:22px;color:#111;font-weight:normal;font-style:normal;letter-spacing:2.0px;white-space:pre;-webkit-text-stroke:0.35px #111;left:1519.40px;width:1200px;text-align:right;">60.00</div>
<svg style="position:absolute;left:2730px;top:924px" width="32" height="32" viewBox="0 0 32 32"><circle cx="16" cy="16" r="14.5" fill="#d8161a" stroke="#aaa" stroke-width="2"/><path d="M11 11 L21 21 M21 11 L11 21" fill="none" stroke="#fff" stroke-width="3.6"/></svg>
<div style="position:absolute;left:2789px;top:926.5px;width:38px;height:29.5px;border:2px solid #777;"></div>
<div style="position:absolute;left:2807px;top:926.5px;width:2px;height:29.5px;background:#777;"></div>
<div style="position:absolute;left:2849px;top:916px;width:76px;height:48px;background:linear-gradient(#ececec,#d6d6d6);"></div>
<div style="position:absolute;top:928.28px;height:26.81px;line-height:26.81px;font-size:24px;color:#111;font-weight:normal;font-style:normal;letter-spacing:0.4px;white-space:pre;-webkit-text-stroke:0.35px #111;left:2285.80px;width:1200px;text-align:center;">Open</div>
<div style="position:absolute;left:146px;top:966px;width:2779px;height:50px;background:#e8e8e8;"></div>
<div style="position:absolute;left:145px;top:966px;width:40px;height:50px;background:#98b3f7;"></div>
<div style="position:absolute;left:184px;top:966px;width:2px;height:50px;background:#999;"></div>
<div style="position:absolute;left:344px;top:966px;width:2px;height:50px;background:#999;"></div>
<div style="position:absolute;left:504px;top:966px;width:2px;height:50px;background:#999;"></div>
<div style="position:absolute;left:664px;top:966px;width:2px;height:50px;background:#999;"></div>
<div style="position:absolute;left:824px;top:966px;width:2px;height:50px;background:#999;"></div>
<div style="position:absolute;left:1505px;top:966px;width:2px;height:50px;background:#999;"></div>
<div style="position:absolute;left:2184px;top:966px;width:2px;height:50px;background:#999;"></div>
<div style="position:absolute;left:2364px;top:966px;width:2px;height:50px;background:#999;"></div>
<div style="position:absolute;left:2542px;top:966px;width:2px;height:50px;background:#999;"></div>
<div style="position:absolute;left:2722px;top:966px;width:2px;height:50px;background:#999;"></div>
<div style="position:absolute;left:2768px;top:966px;width:2px;height:50px;background:#999;"></div>
<div style="position:absolute;left:2846px;top:966px;width:2px;height:50px;background:#999;"></div>
<div style="position:absolute;left:146px;top:1014px;width:2779px;height:2px;background:#999;"></div>
<div style="position:absolute;top:980.69px;height:24.57px;line-height:24.57px;font-size:22px;color:#111;font-weight:normal;font-style:normal;letter-spacing:1.0px;white-space:pre;-webkit-text-stroke:0.35px #111;left:-434.50px;width:1200px;text-align:center;">SI</div>
<div style="position:absolute;top:980.69px;height:24.57px;line-height:24.57px;font-size:22px;color:#111;font-weight:normal;font-style:normal;letter-spacing:2.4px;white-space:pre;-webkit-text-stroke:0.35px #111;left:-862.60px;width:1200px;text-align:right;">1001</div>
<div style="position:absolute;top:980.69px;height:24.57px;line-height:24.57px;font-size:22px;color:#111;font-weight:normal;font-style:normal;letter-spacing:2.4px;white-space:pre;-webkit-text-stroke:0.35px #111;left:-173.80px;width:1200px;text-align:center;">16/02/2016</div>
<div style="position:absolute;top:980.69px;height:24.57px;line-height:24.57px;font-size:22px;color:#111;font-weight:normal;font-style:normal;letter-spacing:2.4px;white-space:pre;-webkit-text-stroke:0.35px #111;left:-13.80px;width:1200px;text-align:center;">18/02/2016</div>
<div style="position:absolute;top:980.69px;height:24.57px;line-height:24.57px;font-size:22px;color:#111;font-weight:normal;font-style:normal;letter-spacing:1.3px;white-space:pre;-webkit-text-stroke:0.35px #111;left:145.65px;width:1200px;text-align:center;">GU15 HLP</div>
<div style="position:absolute;top:980.69px;height:24.57px;line-height:24.57px;font-size:22px;color:#111;font-weight:normal;font-style:normal;letter-spacing:1.3px;white-space:pre;-webkit-text-stroke:0.35px #111;left:835.00px;">Audi A6</div>
<div style="position:absolute;top:980.69px;height:24.57px;line-height:24.57px;font-size:22px;color:#111;font-weight:normal;font-style:normal;letter-spacing:1.3px;white-space:pre;-webkit-text-stroke:0.35px #111;left:1517.50px;">Mrs Veronica Jones</div>
<div style="position:absolute;top:980.69px;height:24.57px;line-height:24.57px;font-size:22px;color:#111;font-weight:normal;font-style:normal;letter-spacing:2.0px;white-space:pre;-webkit-text-stroke:0.35px #111;left:1161.00px;width:1200px;text-align:right;">216.00</div>
<div style="position:absolute;top:980.69px;height:24.57px;line-height:24.57px;font-size:22px;color:#111;font-weight:normal;font-style:normal;letter-spacing:1.3px;white-space:pre;-webkit-text-stroke:0.35px #111;left:2376.50px;">Multiple</div>
<svg style="position:absolute;left:2505px;top:971px" width="40.0" height="38.0" viewBox="0 0 40 38"><path d="M14.5 9 H10 V31 H28 V24" stroke="#999" stroke-width="2" fill="none"/><path d="M18 8 H30 V20" stroke="#999" stroke-width="2" fill="none"/><path d="M21 11 L17.5 18 L21 23 L29 14" stroke="#a8a8a8" stroke-width="2.2" fill="none"/></svg>
<svg style="position:absolute;left:2730px;top:974px" width="32" height="32" viewBox="0 0 32 32"><circle cx="16" cy="16" r="14.5" fill="#67ac3a" stroke="#aaa" stroke-width="2"/><path d="M9.5 16.5 L14 20.5 L22.5 11.5" fill="none" stroke="#fff" stroke-width="3.2"/></svg>
<div style="position:absolute;left:2789px;top:976.5px;width:38px;height:29.5px;border:2px solid #777;"></div>
<div style="position:absolute;left:2807px;top:976.5px;width:2px;height:29.5px;background:#777;"></div>
<div style="position:absolute;left:2849px;top:966px;width:76px;height:48px;background:linear-gradient(#ececec,#d6d6d6);"></div>
<div style="position:absolute;top:978.28px;height:26.81px;line-height:26.81px;font-size:24px;color:#111;font-weight:normal;font-style:normal;letter-spacing:0.4px;white-space:pre;-webkit-text-stroke:0.35px #111;left:2285.80px;width:1200px;text-align:center;">Open</div>
<div style="position:absolute;left:146px;top:1016px;width:2779px;height:50px;background:#ffffff;"></div>
<div style="position:absolute;left:145px;top:1016px;width:40px;height:50px;background:#98b3f7;"></div>
<div style="position:absolute;left:184px;top:1016px;width:2px;height:50px;background:#999;"></div>
<div style="position:absolute;left:344px;top:1016px;width:2px;height:50px;background:#999;"></div>
<div style="position:absolute;left:504px;top:1016px;width:2px;height:50px;background:#999;"></div>
<div style="position:absolute;left:664px;top:1016px;width:2px;height:50px;background:#999;"></div>
<div style="position:absolute;left:824px;top:1016px;width:2px;height:50px;background:#999;"></div>
<div style="position:absolute;left:1505px;top:1016px;width:2px;height:50px;background:#999;"></div>
<div style="position:absolute;left:2184px;top:1016px;width:2px;height:50px;background:#999;"></div>
<div style="position:absolute;left:2364px;top:1016px;width:2px;height:50px;background:#999;"></div>
<div style="position:absolute;left:2542px;top:1016px;width:2px;height:50px;background:#999;"></div>
<div style="position:absolute;left:2722px;top:1016px;width:2px;height:50px;background:#999;"></div>
<div style="position:absolute;left:2768px;top:1016px;width:2px;height:50px;background:#999;"></div>
<div style="position:absolute;left:2846px;top:1016px;width:2px;height:50px;background:#999;"></div>
<div style="position:absolute;left:146px;top:1064px;width:2779px;height:2px;background:#999;"></div>
<div style="position:absolute;top:1030.69px;height:24.57px;line-height:24.57px;font-size:22px;color:#111;font-weight:normal;font-style:normal;letter-spacing:1.0px;white-space:pre;-webkit-text-stroke:0.35px #111;left:-434.50px;width:1200px;text-align:center;">SI</div>
<div style="position:absolute;top:1030.69px;height:24.57px;line-height:24.57px;font-size:22px;color:#111;font-weight:normal;font-style:normal;letter-spacing:2.4px;white-space:pre;-webkit-text-stroke:0.35px #111;left:-862.60px;width:1200px;text-align:right;">1000</div>
<div style="position:absolute;top:1030.69px;height:24.57px;line-height:24.57px;font-size:22px;color:#111;font-weight:normal;font-style:normal;letter-spacing:2.4px;white-space:pre;-webkit-text-stroke:0.35px #111;left:-173.80px;width:1200px;text-align:center;">16/02/2016</div>
<div style="position:absolute;top:1030.69px;height:24.57px;line-height:24.57px;font-size:22px;color:#111;font-weight:normal;font-style:normal;letter-spacing:2.4px;white-space:pre;-webkit-text-stroke:0.35px #111;left:-13.80px;width:1200px;text-align:center;">18/02/2016</div>
<div style="position:absolute;top:1030.69px;height:24.57px;line-height:24.57px;font-size:22px;color:#111;font-weight:normal;font-style:normal;letter-spacing:1.3px;white-space:pre;-webkit-text-stroke:0.35px #111;left:145.65px;width:1200px;text-align:center;">G65 HGT</div>
<div style="position:absolute;top:1030.69px;height:24.57px;line-height:24.57px;font-size:22px;color:#111;font-weight:normal;font-style:normal;letter-spacing:1.3px;white-space:pre;-webkit-text-stroke:0.35px #111;left:835.00px;">Vauxhall Astra</div>
<div style="position:absolute;top:1030.69px;height:24.57px;line-height:24.57px;font-size:22px;color:#111;font-weight:normal;font-style:normal;letter-spacing:1.3px;white-space:pre;-webkit-text-stroke:0.35px #111;left:1517.50px;">Mr Robert Woodhouse</div>
<div style="position:absolute;top:1030.69px;height:24.57px;line-height:24.57px;font-size:22px;color:#111;font-weight:normal;font-style:normal;letter-spacing:2.0px;white-space:pre;-webkit-text-stroke:0.35px #111;left:1161.00px;width:1200px;text-align:right;">161.60</div>
<div style="position:absolute;top:1030.69px;height:24.57px;line-height:24.57px;font-size:22px;color:#111;font-weight:normal;font-style:normal;letter-spacing:1.3px;white-space:pre;-webkit-text-stroke:0.35px #111;left:2376.50px;">Debit Card</div>
<svg style="position:absolute;left:2505px;top:1021px" width="40.0" height="38.0" viewBox="0 0 40 38"><path d="M14.5 9 H10 V31 H28 V24" stroke="#999" stroke-width="2" fill="none"/><path d="M18 8 H30 V20" stroke="#999" stroke-width="2" fill="none"/><path d="M21 11 L17.5 18 L21 23 L29 14" stroke="#a8a8a8" stroke-width="2.2" fill="none"/></svg>
<svg style="position:absolute;left:2730px;top:1024px" width="32" height="32" viewBox="0 0 32 32"><circle cx="16" cy="16" r="14.5" fill="#67ac3a" stroke="#aaa" stroke-width="2"/><path d="M9.5 16.5 L14 20.5 L22.5 11.5" fill="none" stroke="#fff" stroke-width="3.2"/></svg>
<div style="position:absolute;left:2789px;top:1026.5px;width:38px;height:29.5px;border:2px solid #777;"></div>
<div style="position:absolute;left:2807px;top:1026.5px;width:2px;height:29.5px;background:#777;"></div>
<div style="position:absolute;left:2849px;top:1016px;width:76px;height:48px;background:linear-gradient(#ececec,#d6d6d6);"></div>
<div style="position:absolute;top:1028.28px;height:26.81px;line-height:26.81px;font-size:24px;color:#111;font-weight:normal;font-style:normal;letter-spacing:0.4px;white-space:pre;-webkit-text-stroke:0.35px #111;left:2285.80px;width:1200px;text-align:center;">Open</div>
<div style="position:absolute;left:2924px;top:516px;width:2px;height:774px;background:#aaa;"></div>
<div style="position:absolute;left:2926px;top:516px;width:32px;height:34px;background:#f0f0f0;border-bottom:2px solid #ccc;"></div>
<svg style="position:absolute;left:2933px;top:525px" width="18" height="14"><polygon points="9,1 17,12 1,12" fill="#8a8a8a"/></svg>
<div style="position:absolute;left:2926px;top:1256px;width:32px;height:34px;background:linear-gradient(#f4f4f4,#e6e6e6);border-top:2px solid #c4c4c4;"></div>
<svg style="position:absolute;left:2933px;top:1265px" width="18" height="14"><polygon points="1,1 17,1 9,12" fill="#8a8a8a"/></svg>
<div style="position:absolute;left:1466px;top:1300px;width:174px;height:22px;background:linear-gradient(#9a9a9a,#6e6e6e 40%,#555 75%,#4a4a4a);border:2px solid #1e1e1e;border-bottom:none;border-radius:6px 6px 0 0;"></div>
<svg style="position:absolute;left:1543px;top:1303px" width="20" height="18"><path d="M4 3 L10 8 L16 3 M4 9 L10 14 L16 9" fill="none" stroke="#fff" stroke-width="2.4"/></svg>
<div style="position:absolute;left:144px;top:1322px;width:2816px;height:348px;background:#f4f4f4;border:2px solid #1d1d1d;border-radius:0 0 7px 7px;overflow:hidden;"></div>
<div style="position:absolute;left:146px;top:1324px;width:2812px;height:46px;background:#5e5e5e;"></div>
<div style="position:absolute;left:325px;top:1322px;width:2px;height:48px;background:#222;"></div>
<div style="position:absolute;left:507px;top:1322px;width:2px;height:48px;background:#222;"></div>
<div style="position:absolute;left:689px;top:1322px;width:2px;height:48px;background:#222;"></div>
<div style="position:absolute;left:872px;top:1322px;width:2px;height:48px;background:#222;"></div>
<div style="position:absolute;left:1054px;top:1322px;width:2px;height:48px;background:#222;"></div>
<div style="position:absolute;left:146px;top:1363px;width:180px;height:1.5px;background:#1e1e1e;"></div>
<div style="position:absolute;left:146px;top:1364.5px;width:180px;height:5.5px;background:#999;"></div>
<div style="position:absolute;top:1333.40px;height:22.34px;line-height:22.34px;font-size:20px;color:#eeeeee;font-weight:normal;font-style:normal;letter-spacing:0.9px;white-space:pre;-webkit-text-stroke:0.35px #eeeeee;left:-363.55px;width:1200px;text-align:center;">Details</div>
<div style="position:absolute;top:1337.70px;height:22.34px;line-height:22.34px;font-size:20px;color:#eeeeee;font-weight:normal;font-style:normal;letter-spacing:0.95px;white-space:pre;-webkit-text-stroke:0.35px #eeeeee;left:-182.03px;width:1200px;text-align:center;">Description</div>
<div style="position:absolute;top:1337.70px;height:22.34px;line-height:22.34px;font-size:20px;color:#eeeeee;font-weight:normal;font-style:normal;letter-spacing:0.95px;white-space:pre;-webkit-text-stroke:0.35px #eeeeee;left:-0.03px;width:1200px;text-align:center;">Labour</div>
<div style="position:absolute;top:1337.70px;height:22.34px;line-height:22.34px;font-size:20px;color:#eeeeee;font-weight:normal;font-style:normal;letter-spacing:0.95px;white-space:pre;-webkit-text-stroke:0.35px #eeeeee;left:181.97px;width:1200px;text-align:center;">Parts</div>
<div style="position:absolute;top:1337.70px;height:22.34px;line-height:22.34px;font-size:20px;color:#eeeeee;font-weight:normal;font-style:normal;letter-spacing:0.95px;white-space:pre;-webkit-text-stroke:0.35px #eeeeee;left:364.48px;width:1200px;text-align:center;">Advisories</div>
<div style="position:absolute;top:1336.49px;height:24.57px;line-height:24.57px;font-size:22px;color:#eeeeee;font-weight:normal;font-style:italic;letter-spacing:1.17px;white-space:pre;-webkit-text-stroke:0.35px #eeeeee;left:2632.00px;">Issued &amp; Paid</div>
<div style="position:absolute;left:2800px;top:1328px;width:152px;height:38px;background:linear-gradient(#6a6a6a,#4e4b4e);border:2px solid #2a2a2a;border-radius:7px;"></div>
<div style="position:absolute;left:2850px;top:1330px;width:2px;height:34px;background:#222;"></div>
<div style="position:absolute;left:2900px;top:1330px;width:2px;height:34px;background:#222;"></div>
<div style="position:absolute;top:1336.28px;height:26.81px;line-height:26.81px;font-size:24px;color:#fff;font-weight:normal;font-style:normal;letter-spacing:0.0px;white-space:pre;-webkit-text-stroke:0.5px #fff;left:2225.50px;width:1200px;text-align:center;">&lt;</div>
<div style="position:absolute;top:1336.28px;height:26.81px;line-height:26.81px;font-size:24px;color:#fff;font-weight:normal;font-style:normal;letter-spacing:0.0px;white-space:pre;-webkit-text-stroke:0.5px #fff;left:2326.00px;width:1200px;text-align:center;">&gt;</div>
<svg style="position:absolute;left:2868px;top:1334px" width="16" height="30" viewBox="0 0 16 30"><path d="M8 2 V25 M3 8 L8 2 L13 8 M3 19 L8 25 L13 19 M3 28 H13" fill="none" stroke="#fff" stroke-width="2"/></svg>
<div style="position:absolute;left:146px;top:1370px;width:2812px;height:2px;background:#1e1e1e;"></div>
<div style="position:absolute;left:146px;top:1372px;width:2812px;height:44px;background:#05364d;"></div>
<div style="position:absolute;top:1382.38px;height:27.93px;line-height:27.93px;font-size:25px;color:#ffffff;font-weight:normal;font-style:normal;letter-spacing:1.73px;white-space:pre;-webkit-text-stroke:0.9px #ffffff;left:158.20px;"><b>Standard Invoice:</b></div>
<div style="position:absolute;top:1382.38px;height:27.93px;line-height:27.93px;font-size:25px;color:#ffffff;font-weight:normal;font-style:normal;letter-spacing:1.5px;white-space:pre;-webkit-text-stroke:0.35px #ffffff;left:410.00px;">1006</div>
<div style="position:absolute;left:146px;top:1416px;width:2812px;height:2px;background:#1a1a1a;"></div>
<div style="position:absolute;left:492px;top:1418px;width:2px;height:250px;background:#cfcfcf;"></div>
<div style="position:absolute;left:1258px;top:1418px;width:2px;height:250px;background:#cfcfcf;"></div>
<div style="position:absolute;left:1670px;top:1418px;width:2px;height:250px;background:#cfcfcf;"></div>
<div style="position:absolute;top:1456.18px;height:25.69px;line-height:25.69px;font-size:23px;color:#444;font-weight:normal;font-style:normal;letter-spacing:0.38px;white-space:pre;-webkit-text-stroke:0.35px #444;left:160.50px;">Created</div>
<div style="position:absolute;top:1493.68px;height:25.69px;line-height:25.69px;font-size:23px;color:#444;font-weight:normal;font-style:normal;letter-spacing:0.38px;white-space:pre;-webkit-text-stroke:0.35px #444;left:160.50px;">DueBy</div>
<div style="position:absolute;top:1531.18px;height:25.69px;line-height:25.69px;font-size:23px;color:#444;font-weight:normal;font-style:normal;letter-spacing:0.38px;white-space:pre;-webkit-text-stroke:0.35px #444;left:160.50px;">Printed</div>
<div style="position:absolute;top:1568.68px;height:25.69px;line-height:25.69px;font-size:23px;color:#444;font-weight:normal;font-style:normal;letter-spacing:0.38px;white-space:pre;-webkit-text-stroke:0.35px #444;left:160.50px;">Issued</div>
<div style="position:absolute;top:1606.18px;height:25.69px;line-height:25.69px;font-size:23px;color:#444;font-weight:normal;font-style:normal;letter-spacing:0.38px;white-space:pre;-webkit-text-stroke:0.35px #444;left:160.50px;">Paid</div>
<div style="position:absolute;left:295px;top:1447px;width:178px;height:190px;background:#f6f6f6;border:2px solid #c8c8c8;border-radius:6px;"></div>
<div style="position:absolute;left:295px;top:1484px;width:178px;height:2px;background:#c8c8c8;"></div>
<div style="position:absolute;left:295px;top:1522px;width:178px;height:2px;background:#c8c8c8;"></div>
<div style="position:absolute;left:295px;top:1560px;width:178px;height:2px;background:#c8c8c8;"></div>
<div style="position:absolute;left:295px;top:1598px;width:178px;height:2px;background:#c8c8c8;"></div>
<div style="position:absolute;top:1456.18px;height:25.69px;line-height:25.69px;font-size:23px;color:#111;font-weight:normal;font-style:normal;letter-spacing:1.0px;white-space:pre;-webkit-text-stroke:0.35px #111;left:-215.50px;width:1200px;text-align:center;">17 Feb 2016</div>
<div style="position:absolute;top:1493.68px;height:25.69px;line-height:25.69px;font-size:23px;color:#111;font-weight:normal;font-style:normal;letter-spacing:1.0px;white-space:pre;-webkit-text-stroke:0.35px #111;left:-215.50px;width:1200px;text-align:center;">17 Feb 2016</div>
<div style="position:absolute;top:1531.18px;height:25.69px;line-height:25.69px;font-size:23px;color:#111;font-weight:normal;font-style:normal;letter-spacing:1.0px;white-space:pre;-webkit-text-stroke:0.35px #111;left:-215.50px;width:1200px;text-align:center;">21 Feb 2016</div>
<div style="position:absolute;top:1568.68px;height:25.69px;line-height:25.69px;font-size:23px;color:#111;font-weight:normal;font-style:normal;letter-spacing:1.0px;white-space:pre;-webkit-text-stroke:0.35px #111;left:-215.50px;width:1200px;text-align:center;">21 Feb 2016</div>
<div style="position:absolute;top:1606.18px;height:25.69px;line-height:25.69px;font-size:23px;color:#111;font-weight:normal;font-style:normal;letter-spacing:1.0px;white-space:pre;-webkit-text-stroke:0.35px #111;left:-215.50px;width:1200px;text-align:center;">21 Feb 2016</div>
<div style="position:absolute;top:1456.18px;height:25.69px;line-height:25.69px;font-size:23px;color:#444;font-weight:normal;font-style:normal;letter-spacing:0.7px;white-space:pre;-webkit-text-stroke:0.35px #444;left:512.00px;">Acc Number</div>
<div style="position:absolute;top:1493.68px;height:25.69px;line-height:25.69px;font-size:23px;color:#444;font-weight:normal;font-style:normal;letter-spacing:0.7px;white-space:pre;-webkit-text-stroke:0.35px #444;left:512.00px;">Company</div>
<div style="position:absolute;top:1531.18px;height:25.69px;line-height:25.69px;font-size:23px;color:#444;font-weight:normal;font-style:normal;letter-spacing:0.7px;white-space:pre;-webkit-text-stroke:0.35px #444;left:512.00px;">Telephone</div>
<div style="position:absolute;top:1568.68px;height:25.69px;line-height:25.69px;font-size:23px;color:#444;font-weight:normal;font-style:normal;letter-spacing:0.7px;white-space:pre;-webkit-text-stroke:0.35px #444;left:512.00px;">Mobile</div>
<div style="position:absolute;top:1606.18px;height:25.69px;line-height:25.69px;font-size:23px;color:#444;font-weight:normal;font-style:normal;letter-spacing:0.7px;white-space:pre;-webkit-text-stroke:0.35px #444;left:512.00px;">Order Ref</div>
<div style="position:absolute;left:731px;top:1447px;width:508px;height:190px;background:#f6f6f6;border:2px solid #c8c8c8;border-radius:6px;"></div>
<div style="position:absolute;left:731px;top:1484px;width:508px;height:2px;background:#c8c8c8;"></div>
<div style="position:absolute;left:731px;top:1522px;width:508px;height:2px;background:#c8c8c8;"></div>
<div style="position:absolute;left:731px;top:1560px;width:508px;height:2px;background:#c8c8c8;"></div>
<div style="position:absolute;left:731px;top:1598px;width:508px;height:2px;background:#c8c8c8;"></div>
<div style="position:absolute;top:1456.18px;height:25.69px;line-height:25.69px;font-size:23px;color:#111;font-weight:normal;font-style:normal;letter-spacing:1.0px;white-space:pre;-webkit-text-stroke:0.35px #111;left:740.50px;">SPE001</div>
<div style="position:absolute;top:1493.68px;height:25.69px;line-height:25.69px;font-size:23px;color:#111;font-weight:normal;font-style:normal;letter-spacing:1.0px;white-space:pre;-webkit-text-stroke:0.35px #111;left:740.50px;">Miss A Spencer</div>
<div style="position:absolute;top:1531.18px;height:25.69px;line-height:25.69px;font-size:23px;color:#111;font-weight:normal;font-style:normal;letter-spacing:1.0px;white-space:pre;-webkit-text-stroke:0.35px #111;left:740.50px;">0844 3570600</div>
<div style="position:absolute;top:1456.18px;height:25.69px;line-height:25.69px;font-size:23px;color:#444;font-weight:normal;font-style:normal;letter-spacing:0.7px;white-space:pre;-webkit-text-stroke:0.35px #444;left:1277.00px;">Registration</div>
<div style="position:absolute;top:1493.68px;height:25.69px;line-height:25.69px;font-size:23px;color:#444;font-weight:normal;font-style:normal;letter-spacing:0.7px;white-space:pre;-webkit-text-stroke:0.35px #444;left:1277.00px;">Mileage</div>
<div style="position:absolute;top:1568.68px;height:25.69px;line-height:25.69px;font-size:23px;color:#444;font-weight:normal;font-style:normal;letter-spacing:0.7px;white-space:pre;-webkit-text-stroke:0.35px #444;left:1277.00px;">MOT</div>
<div style="position:absolute;top:1606.18px;height:25.69px;line-height:25.69px;font-size:23px;color:#444;font-weight:normal;font-style:normal;letter-spacing:0.7px;white-space:pre;-webkit-text-stroke:0.35px #444;left:1277.00px;">Road Tester</div>
<div style="position:absolute;left:1453px;top:1447px;width:198px;height:76px;background:#f6f6f6;border:2px solid #c8c8c8;border-radius:6px;"></div>
<div style="position:absolute;left:1453px;top:1484px;width:198px;height:2px;background:#c8c8c8;"></div>
<div style="position:absolute;top:1456.18px;height:25.69px;line-height:25.69px;font-size:23px;color:#111;font-weight:normal;font-style:normal;letter-spacing:1.0px;white-space:pre;-webkit-text-stroke:0.35px #111;left:952.50px;width:1200px;text-align:center;">ST53 AMY</div>
<div style="position:absolute;top:1493.68px;height:25.69px;line-height:25.69px;font-size:23px;color:#111;font-weight:normal;font-style:normal;letter-spacing:1.5px;white-space:pre;-webkit-text-stroke:0.35px #111;left:952.75px;width:1200px;text-align:center;">50550</div>
<div style="position:absolute;left:1453px;top:1561px;width:198px;height:76px;background:#f6f6f6;border:2px solid #c8c8c8;border-radius:6px;"></div>
<div style="position:absolute;left:1453px;top:1598px;width:198px;height:2px;background:#c8c8c8;"></div>
<div style="position:absolute;top:1456.18px;height:25.69px;line-height:25.69px;font-size:23px;color:#444;font-weight:normal;font-style:normal;letter-spacing:0.3px;white-space:pre;-webkit-text-stroke:0.6px #444;left:2581.00px;"><b>Total</b></div>
<div style="position:absolute;top:1493.68px;height:25.69px;line-height:25.69px;font-size:23px;color:#444;font-weight:normal;font-style:normal;letter-spacing:0.5px;white-space:pre;-webkit-text-stroke:0.35px #444;left:2581.00px;">Excess</div>
<div style="position:absolute;top:1531.18px;height:25.69px;line-height:25.69px;font-size:23px;color:#444;font-weight:normal;font-style:normal;letter-spacing:0.0px;white-space:pre;-webkit-text-stroke:0.6px #444;left:2581.00px;"><b>Receipts</b></div>
<div style="position:absolute;top:1569.78px;height:25.69px;line-height:25.69px;font-size:23px;color:#444;font-weight:normal;font-style:normal;letter-spacing:0.0px;white-space:pre;-webkit-text-stroke:0.6px #444;left:2581.00px;"><b>Balance</b></div>
<svg style="position:absolute;left:2696px;top:1524px" width="48.0" height="45.6" viewBox="0 0 40 38"><path d="M14.5 9 H10 V31 H28 V24" stroke="#999" stroke-width="2" fill="none"/><path d="M18 8 H30 V20" stroke="#999" stroke-width="2" fill="none"/><path d="M21 11 L17.5 18 L21 23 L29 14" stroke="#a8a8a8" stroke-width="2.2" fill="none"/></svg>
<div style="position:absolute;left:2747px;top:1447px;width:199px;height:152px;background:#f6f6f6;border:2px solid #c8c8c8;border-radius:6px;overflow:hidden;"></div>
<div style="position:absolute;left:2749px;top:1562px;width:195px;height:35px;background:#fffadc;border-radius:0 0 4px 4px;"></div>
<div style="position:absolute;left:2747px;top:1484px;width:199px;height:2px;background:#c8c8c8;"></div>
<div style="position:absolute;left:2747px;top:1522px;width:199px;height:2px;background:#c8c8c8;"></div>
<div style="position:absolute;left:2747px;top:1560px;width:199px;height:2px;background:#c8c8c8;"></div>
<div style="position:absolute;top:1456.18px;height:25.69px;line-height:25.69px;font-size:23px;color:#111;font-weight:normal;font-style:normal;letter-spacing:1.5px;white-space:pre;-webkit-text-stroke:0.35px #111;left:1735.50px;width:1200px;text-align:right;">1,218.71</div>
<div style="position:absolute;top:1493.68px;height:25.69px;line-height:25.69px;font-size:23px;color:#111;font-weight:normal;font-style:normal;letter-spacing:1.5px;white-space:pre;-webkit-text-stroke:0.35px #111;left:1735.50px;width:1200px;text-align:right;">0.00</div>
<div style="position:absolute;top:1531.18px;height:25.69px;line-height:25.69px;font-size:23px;color:#111;font-weight:normal;font-style:normal;letter-spacing:1.5px;white-space:pre;-webkit-text-stroke:0.35px #111;left:1735.50px;width:1200px;text-align:right;">1,218.71</div>
<div style="position:absolute;top:1569.78px;height:25.69px;line-height:25.69px;font-size:23px;color:#111;font-weight:normal;font-style:normal;letter-spacing:1.5px;white-space:pre;-webkit-text-stroke:0.35px #111;left:1735.50px;width:1200px;text-align:right;">0.00</div>
<div style="position:absolute;left:112px;top:1702px;width:2880px;height:32px;background:#fff;border-top:2px solid #bdbdbd;"></div>
<div style="position:absolute;top:1708.59px;height:24.57px;line-height:24.57px;font-size:22px;color:#111;font-weight:normal;font-style:normal;letter-spacing:0.5px;white-space:pre;-webkit-text-stroke:0.35px #111;left:116.00px;">100</div>
<div style="position:absolute;left:158px;top:1703px;width:2px;height:31px;background:#cfcfcf;"></div>
<div style="position:absolute;left:190px;top:1703px;width:2px;height:31px;background:#cfcfcf;"></div>
<div style="position:absolute;left:222px;top:1703px;width:2px;height:31px;background:#cfcfcf;"></div>
<div style="position:absolute;left:262px;top:1703px;width:2px;height:31px;background:#cfcfcf;"></div>
<div style="position:absolute;left:450px;top:1703px;width:2px;height:31px;background:#cfcfcf;"></div>
<div style="position:absolute;left:224px;top:1704px;width:38px;height:30px;background:#e4e4e4;"></div>
<svg style="position:absolute;left:164px;top:1711px" width="24" height="18"><rect x="2" y="6" width="20" height="5" fill="#888" stroke="#666" stroke-width="1"/></svg>
<svg style="position:absolute;left:196px;top:1709px" width="24" height="22"><path d="M8 2 H14 V8 H20 V14 H14 V20 H8 V14 H2 V8 H8 Z" fill="#999" stroke="#666" stroke-width="1"/></svg>
<svg style="position:absolute;left:231px;top:1709px" width="24" height="20"><rect x="1.5" y="1.5" width="20" height="15" fill="none" stroke="#bbb" stroke-width="2"/><line x1="1" y1="7" x2="22" y2="7" stroke="#bbb" stroke-width="2"/></svg>
<div style="position:absolute;top:1708.59px;height:24.57px;line-height:24.57px;font-size:22px;color:#111;font-weight:normal;font-style:normal;letter-spacing:0.2px;white-space:pre;-webkit-text-stroke:0.35px #111;left:-242.90px;width:1200px;text-align:center;">Browse</div>
</body></html>
